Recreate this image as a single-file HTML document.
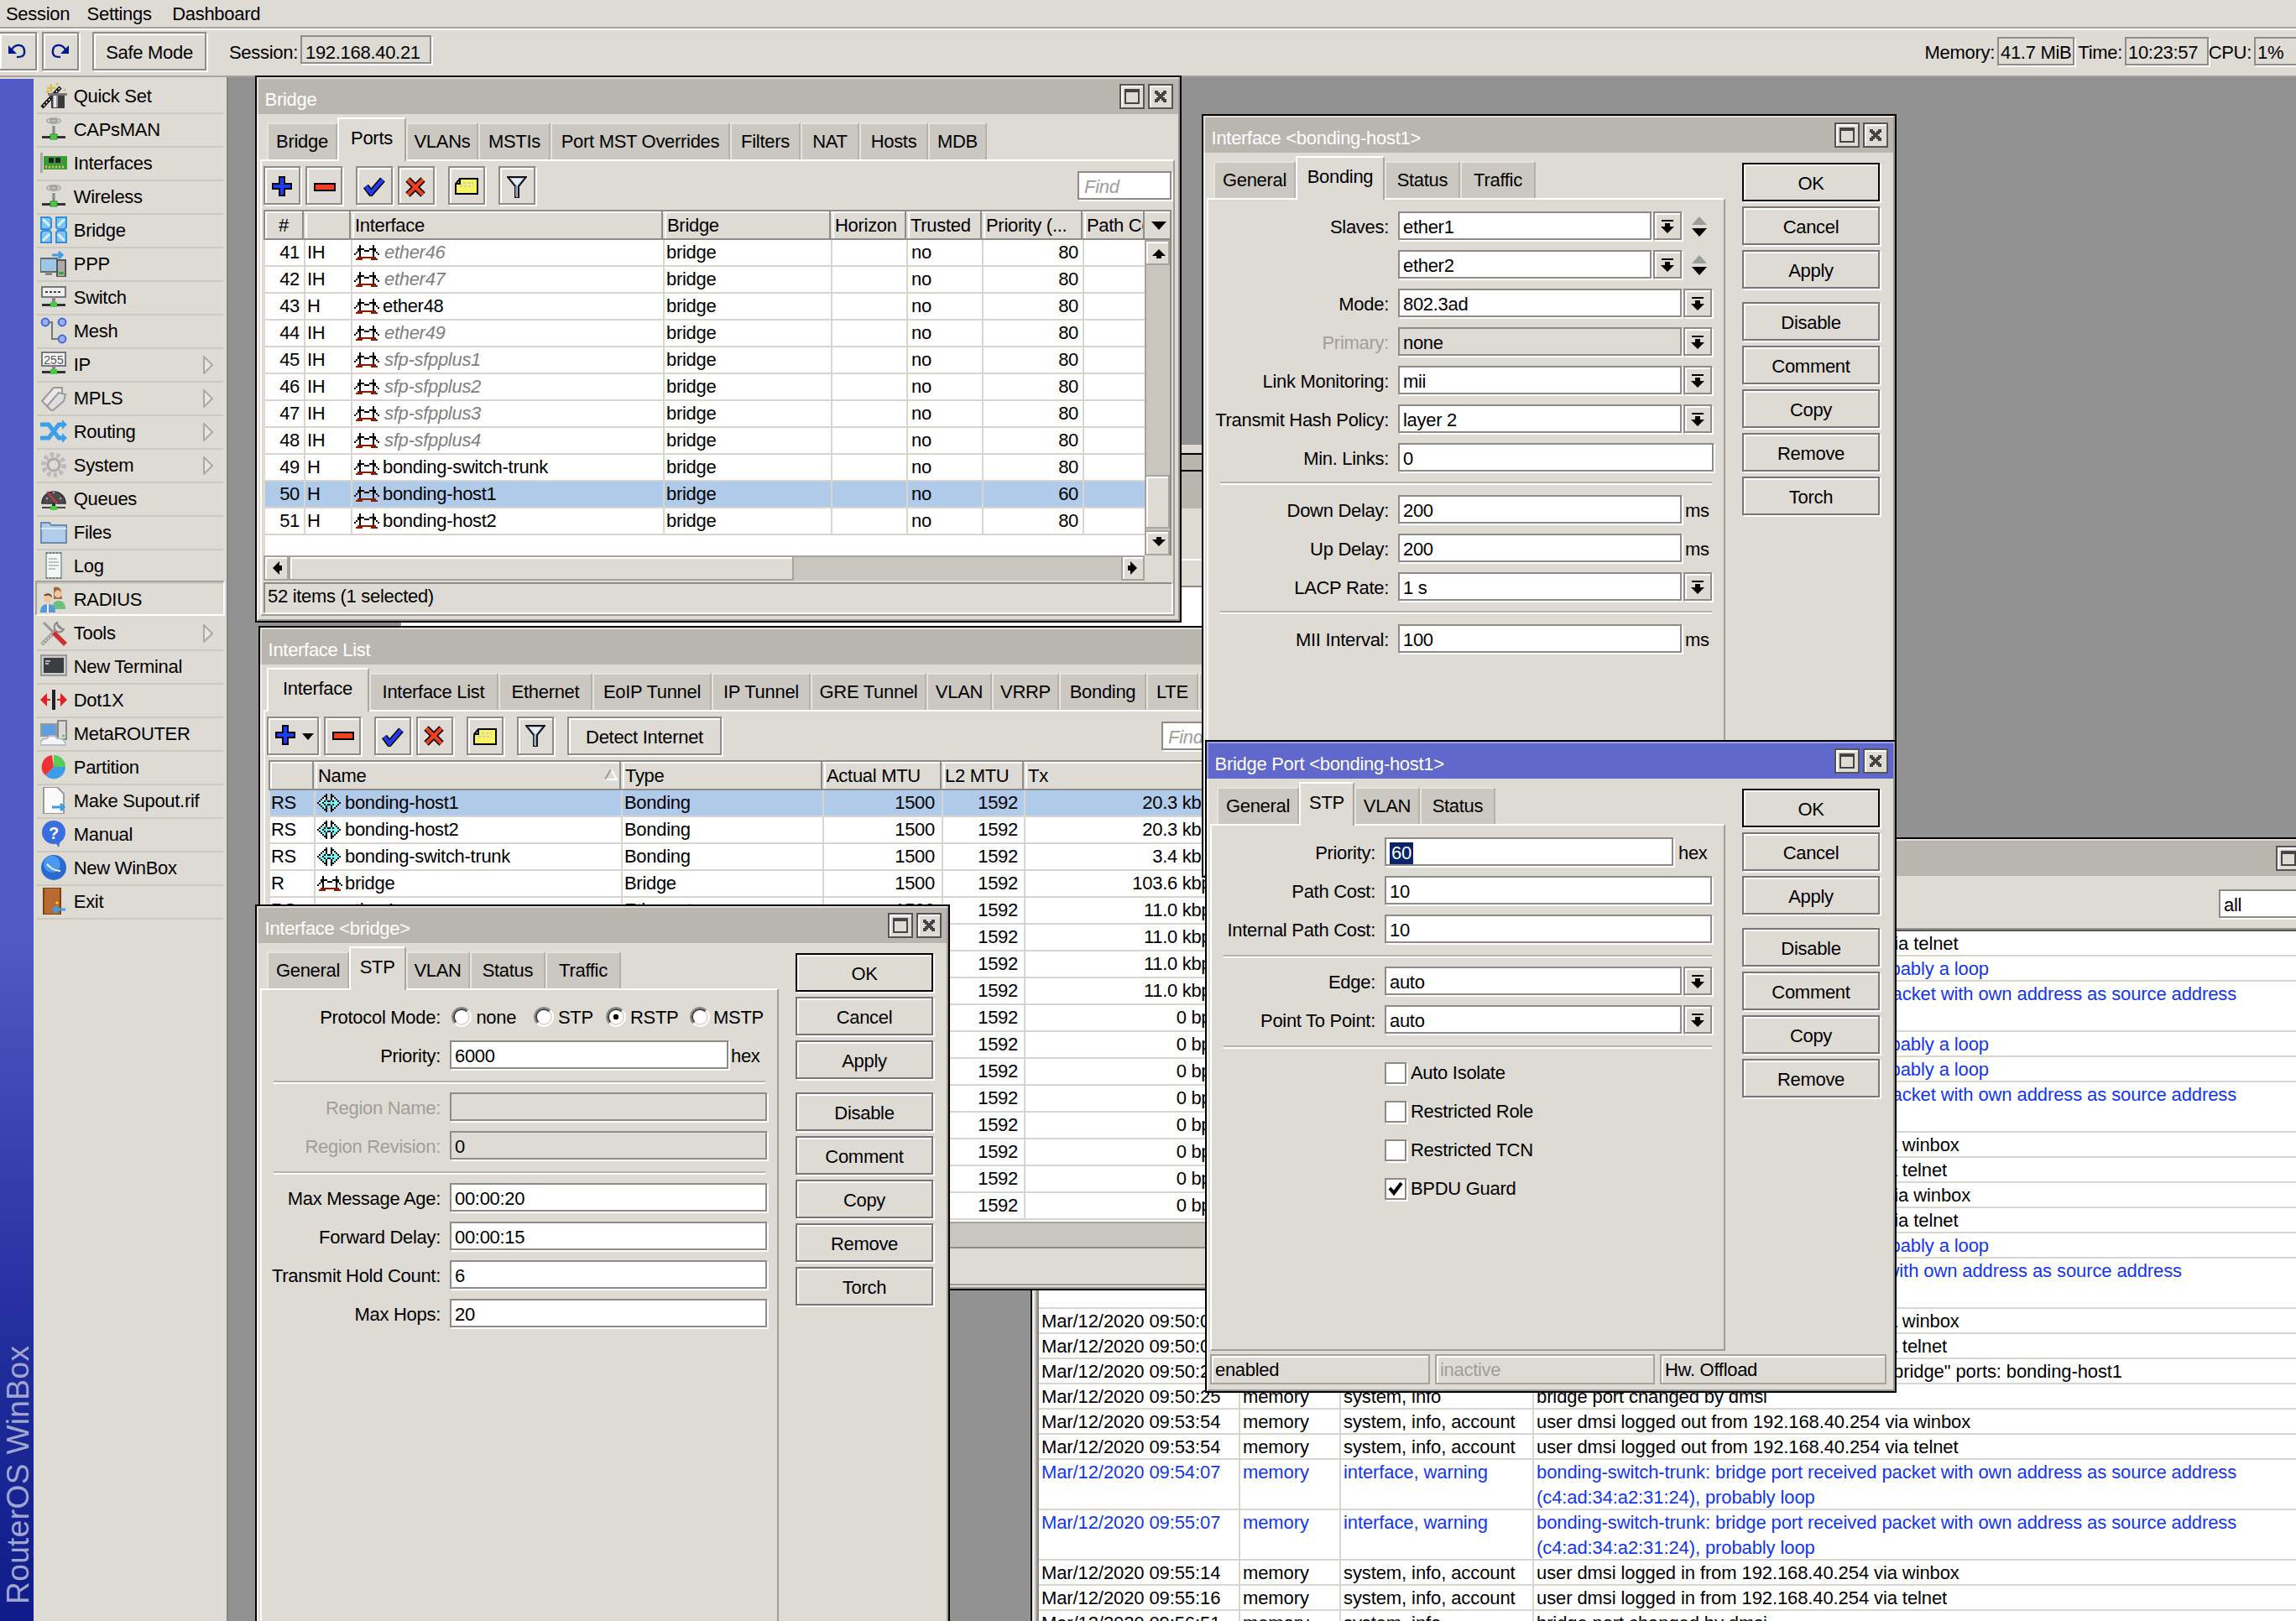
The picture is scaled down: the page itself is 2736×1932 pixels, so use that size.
<!DOCTYPE html><html><head><meta charset="utf-8"><style>
html,body{margin:0;padding:0;background:#DEDBD5;overflow:hidden}
#root{position:absolute;left:0;top:0;width:1368px;height:966px;transform:scale(2);transform-origin:0 0;overflow:hidden;background:#DEDBD5;font-family:"Liberation Sans",sans-serif;font-size:11px;line-height:13px;color:#000}
.a{position:absolute;box-sizing:content-box}
.t{position:absolute;white-space:nowrap;letter-spacing:-0.15px}
.btn{border:1px solid #767676;background:#DEDBD5;box-shadow:inset 1px 1px 0 #fff,1px 1px 0 #fff}
.inp{border:1px solid #8E8C88;box-shadow:1px 1px 0 #fff}
.clip{position:absolute;overflow:hidden}
</style></head><body><div id="root"><div class="t" style="left:3.5px;top:1.70px;">Session</div>
<div class="t" style="left:51.8px;top:1.70px;">Settings</div>
<div class="t" style="left:102.6px;top:1.70px;">Dashboard</div>
<div class="a" style="left:0px;top:16px;width:1368px;height:1px;background:#A6A39D"></div>
<div class="a" style="left:0px;top:17px;width:1368px;height:1px;background:#fff"></div>
<div class="a btn" style="left:-1px;top:19px;width:21px;height:21px;border-color:#8E8C88;"></div>
<svg class="a" style="left:4px;top:25px" width="12" height="10" viewBox="0 0 12 10"><path d="M1 2v5h5z" fill="#001A90"/><path d="M3 4.5C5 1 10 1 10.5 5S8 9 6 9" stroke="#001A90" stroke-width="1.2" fill="none"/></svg>
<div class="a btn" style="left:25px;top:19px;width:20px;height:21px;border-color:#8E8C88;"></div>
<svg class="a" style="left:30px;top:25px" width="12" height="10" viewBox="0 0 12 10"><path d="M11 2v5H6z" fill="#001A90"/><path d="M9 4.5C7 1 2 1 1.5 5S4 9 6 9" stroke="#001A90" stroke-width="1.2" fill="none"/></svg>
<div class="a btn" style="left:55px;top:19px;width:66px;height:21px;border-color:#8E8C88;"></div>
<div class="t" style="left:-111.0px;width:400px;text-align:center;top:24.70px;">Safe Mode</div>
<div class="t" style="right:1190.5px;top:24.70px;">Session:</div>
<div class="a inp" style="left:179px;top:21px;width:76px;height:15px;background:#DEDBD5"></div>
<div class="t" style="left:182px;top:24.70px;">192.168.40.21</div>
<div class="a" style="left:0px;top:45px;width:1368px;height:1px;background:#A6A39D"></div>
<div class="t" style="right:179.5px;top:24.70px;">Memory:</div>
<div class="a inp" style="left:1190px;top:22px;width:44px;height:15px;background:#DEDBD5"></div>
<div class="t" style="left:1192px;top:24.70px;">41.7 MiB</div>
<div class="t" style="right:103.5px;top:24.70px;">Time:</div>
<div class="a inp" style="left:1266px;top:22px;width:48px;height:15px;background:#DEDBD5"></div>
<div class="t" style="left:1268px;top:24.70px;">10:23:57</div>
<div class="t" style="right:26.5px;top:24.70px;">CPU:</div>
<div class="a inp" style="left:1343px;top:22px;width:28px;height:15px;background:#DEDBD5"></div>
<div class="t" style="left:1345px;top:24.70px;">1%</div>
<div class="a" style="left:0px;top:46px;width:20px;height:920px;background:linear-gradient(to bottom,#5159C6 0px,#5159C6 515px,#3B44B2 620px,#2832A2 720px,#1C2896 800px,#0F1C8A 920px)"></div>
<div class="a" style="left:0px;top:46px;width:20px;height:1px;background:#DEDBD5"></div>
<div class="t" style="left:1px;top:966px;width:170px;height:20px;transform-origin:0 0;transform:rotate(-90deg);font-size:18.6px;line-height:20px;color:#A0A6D0;letter-spacing:0.15px;padding-left:10px">RouterOS WinBox</div>
<div class="a" style="left:135px;top:46px;width:1233px;height:920px;background:#929292"></div>
<div class="a" style="left:135px;top:46px;width:1px;height:920px;background:#858585"></div>
<svg class="a" style="left:24px;top:49px" width="16" height="16" viewBox="0 0 16 16"><path d="M1 15L12 3" stroke="#111" stroke-width="2.2"/><path d="M2 14L12 3" stroke="#fff" stroke-width="0.8" stroke-dasharray="1 1.2"/><rect x="6.5" y="7" width="8" height="8.5" fill="#3a3a3a"/><rect x="7.5" y="8" width="3" height="7" fill="#9a9a9a"/><rect x="8" y="8" width="1.5" height="7" fill="#e8e8e8"/><rect x="4.5" y="6.5" width="12" height="1.4" fill="#777"/><path d="M6.5 1v5M4 3.5h5" stroke="#d8c048" stroke-width="1.2"/><circle cx="4.5" cy="5.5" r="1" fill="#d8c048"/><circle cx="10" cy="1" r=".8" fill="#d8c048"/><circle cx="14.5" cy="4.5" r=".8" fill="#d8c048"/></svg>
<div class="t" style="left:43.9px;top:50.70px;">Quick Set</div>
<div class="a" style="left:22px;top:67px;width:111px;height:1px;background:#CCC9C2"></div>
<svg class="a" style="left:24px;top:69px" width="16" height="16" viewBox="0 0 16 16"><ellipse cx="8" cy="3" rx="4" ry="1.6" fill="none" stroke="#aaa" stroke-width=".9"/><ellipse cx="8" cy="3" rx="2" ry=".8" fill="none" stroke="#999" stroke-width=".8"/><rect x="7.2" y="6" width="1.6" height="6" fill="#8a8a8a"/><rect x="1" y="12" width="14" height="1.5" fill="#333"/><rect x="6" y="11" width="4" height="3" fill="#4c4" stroke="#292" stroke-width=".5"/></svg>
<div class="t" style="left:43.9px;top:70.70px;">CAPsMAN</div>
<div class="a" style="left:22px;top:87px;width:111px;height:1px;background:#CCC9C2"></div>
<svg class="a" style="left:24px;top:89px" width="16" height="16" viewBox="0 0 16 16"><rect x="0" y="2" width="1.5" height="12" fill="#aaa"/><rect x="2" y="4" width="14" height="8" fill="#3a9a3a"/><rect x="5" y="5" width="3" height="3" fill="#222"/><rect x="9" y="5" width="3" height="3" fill="#222"/><path d="M3 10.5h12" stroke="#d8c060" stroke-width="1.5" stroke-dasharray="1 1"/></svg>
<div class="t" style="left:43.9px;top:90.70px;">Interfaces</div>
<div class="a" style="left:22px;top:107px;width:111px;height:1px;background:#CCC9C2"></div>
<svg class="a" style="left:24px;top:109px" width="16" height="16" viewBox="0 0 16 16"><ellipse cx="8" cy="3" rx="4" ry="1.6" fill="none" stroke="#aaa" stroke-width=".9"/><ellipse cx="8" cy="3" rx="2" ry=".8" fill="none" stroke="#999" stroke-width=".8"/><rect x="7.2" y="6" width="1.6" height="6" fill="#8a8a8a"/><rect x="1" y="12" width="14" height="1.5" fill="#333"/><rect x="6" y="11" width="4" height="3" fill="#4c4" stroke="#292" stroke-width=".5"/></svg>
<div class="t" style="left:43.9px;top:110.70px;">Wireless</div>
<div class="a" style="left:22px;top:127px;width:111px;height:1px;background:#CCC9C2"></div>
<svg class="a" style="left:24px;top:129px" width="16" height="16" viewBox="0 0 16 16"><g fill="#7CC4F4" stroke="#3A8ED8" stroke-width="1"><path d="M0.5 0.5h5l1 1v5l-1 1h-5z"/><path d="M9.5 0.5h6v6l-1 1h-4l-1-1z"/><path d="M0.5 9.5l1-1h4l1 1v6h-6z"/><path d="M10.5 8.5h4l1 1v6h-6v-6z"/></g><path d="M1.5 1.5l4 4M14.5 1.5l-4 4M1.5 14.5l4-4M14.5 14.5l-4-4" stroke="#D8F0FF" stroke-width="1.5"/></svg>
<div class="t" style="left:43.9px;top:130.70px;">Bridge</div>
<div class="a" style="left:22px;top:147px;width:111px;height:1px;background:#CCC9C2"></div>
<svg class="a" style="left:24px;top:149px" width="16" height="16" viewBox="0 0 16 16"><rect x="0" y="5" width="10" height="8" fill="#9cc8e8" stroke="#666"/><rect x="3" y="13" width="4" height="2" fill="#888"/><rect x="10" y="6" width="5" height="10" fill="#aaa" stroke="#555"/><rect x="11" y="13" width="3" height="1.5" fill="#3a3"/><path d="M7 3h6M11 1l2 2-2 2" stroke="#3a9ee8" stroke-width="1.5" fill="none"/></svg>
<div class="t" style="left:43.9px;top:150.70px;">PPP</div>
<div class="a" style="left:22px;top:167px;width:111px;height:1px;background:#CCC9C2"></div>
<svg class="a" style="left:24px;top:169px" width="16" height="16" viewBox="0 0 16 16"><rect x="1" y="2" width="14" height="6" fill="#eee" stroke="#777"/><path d="M3 5h10" stroke="#444" stroke-dasharray="1.5 1"/><rect x="7" y="8" width="2" height="4" fill="#888"/><rect x="1" y="12" width="14" height="1.5" fill="#333"/><rect x="6" y="11" width="4" height="3" fill="#4c4"/></svg>
<div class="t" style="left:43.9px;top:170.70px;">Switch</div>
<div class="a" style="left:22px;top:187px;width:111px;height:1px;background:#CCC9C2"></div>
<svg class="a" style="left:24px;top:189px" width="16" height="16" viewBox="0 0 16 16"><circle cx="3" cy="3" r="2.2" fill="#9ab0f0" stroke="#4466dd"/><circle cx="13" cy="3" r="2.2" fill="#9ab0f0" stroke="#4466dd"/><circle cx="13" cy="13" r="2.2" fill="#9ab0f0" stroke="#4466dd"/><path d="M5 3h2v10h4M7 8h0" stroke="#777" fill="none"/></svg>
<div class="t" style="left:43.9px;top:190.70px;">Mesh</div>
<div class="a" style="left:22px;top:207px;width:111px;height:1px;background:#CCC9C2"></div>
<svg class="a" style="left:24px;top:209px" width="16" height="16" viewBox="0 0 16 16"><rect x="1" y="1" width="14" height="8" fill="#f4f4f4" stroke="#777"/><text x="8" y="8" font-size="7" text-anchor="middle" fill="#555" font-family="Liberation Sans">255</text><rect x="7" y="9" width="2" height="3" fill="#888"/><rect x="1" y="12" width="14" height="1.5" fill="#333"/><rect x="6" y="11" width="4" height="3" fill="#4c4"/></svg>
<div class="t" style="left:43.9px;top:210.70px;">IP</div>
<svg class="a" style="left:121px;top:212px" width="6" height="11" viewBox="0 0 6 11"><path d="M0.5 0.5L5.5 5.5 0.5 10.5z" fill="#E8E6E2" stroke="#AAA" stroke-width="1"/></svg>
<div class="a" style="left:22px;top:227px;width:111px;height:1px;background:#CCC9C2"></div>
<svg class="a" style="left:24px;top:229px" width="16" height="16" viewBox="0 0 16 16"><path d="M1 10L8 2l5 0 0 4-8 8z" fill="#e8e8e8" stroke="#999"/><path d="M4 13L11 5l4 1-1 4-7 6z" fill="#ddd" stroke="#999"/></svg>
<div class="t" style="left:43.9px;top:230.70px;">MPLS</div>
<svg class="a" style="left:121px;top:232px" width="6" height="11" viewBox="0 0 6 11"><path d="M0.5 0.5L5.5 5.5 0.5 10.5z" fill="#E8E6E2" stroke="#AAA" stroke-width="1"/></svg>
<div class="a" style="left:22px;top:247px;width:111px;height:1px;background:#CCC9C2"></div>
<svg class="a" style="left:24px;top:249px" width="16" height="16" viewBox="0 0 16 16"><path d="M0 4h5l6 8h3M0 12h5l6-8h3" stroke="#3a9ee8" stroke-width="2.5" fill="none"/><path d="M13 1l3 3-3 3zM13 9l3 3-3 3z" fill="#3a9ee8"/></svg>
<div class="t" style="left:43.9px;top:250.70px;">Routing</div>
<svg class="a" style="left:121px;top:252px" width="6" height="11" viewBox="0 0 6 11"><path d="M0.5 0.5L5.5 5.5 0.5 10.5z" fill="#E8E6E2" stroke="#AAA" stroke-width="1"/></svg>
<div class="a" style="left:22px;top:267px;width:111px;height:1px;background:#CCC9C2"></div>
<svg class="a" style="left:24px;top:269px" width="16" height="16" viewBox="0 0 16 16"><circle cx="8" cy="8" r="6" fill="none" stroke="#bbb" stroke-width="3" stroke-dasharray="2.2 1.5"/><circle cx="8" cy="8" r="3.5" fill="none" stroke="#aaa" stroke-width="1.5"/></svg>
<div class="t" style="left:43.9px;top:270.70px;">System</div>
<svg class="a" style="left:121px;top:272px" width="6" height="11" viewBox="0 0 6 11"><path d="M0.5 0.5L5.5 5.5 0.5 10.5z" fill="#E8E6E2" stroke="#AAA" stroke-width="1"/></svg>
<div class="a" style="left:22px;top:287px;width:111px;height:1px;background:#CCC9C2"></div>
<svg class="a" style="left:24px;top:289px" width="16" height="16" viewBox="0 0 16 16"><path d="M1 11a7 7 0 0 1 14 0z" fill="#4a4a50" stroke="#333" stroke-width=".8"/><path d="M4 4l6 7" stroke="#f04030" stroke-width="1.2" stroke-dasharray="1 .6"/><circle cx="4" cy="8" r=".6" fill="#aaa"/><circle cx="12" cy="8" r=".6" fill="#aaa"/><circle cx="8" cy="4.5" r=".6" fill="#aaa"/><rect x="7" y="11" width="2" height="2" fill="#333"/><path d="M1 13.5h14" stroke="#444" stroke-width="1"/><rect x="6" y="12.5" width="4" height="2.5" fill="#4c4"/></svg>
<div class="t" style="left:43.9px;top:290.70px;">Queues</div>
<div class="a" style="left:22px;top:307px;width:111px;height:1px;background:#CCC9C2"></div>
<svg class="a" style="left:24px;top:309px" width="16" height="16" viewBox="0 0 16 16"><path d="M0.5 2.5h5l1 1.5h9v10.5H0.5z" fill="#b0cce8" stroke="#6a8cb0"/><path d="M0.5 6h15" stroke="#d8e8f8"/></svg>
<div class="t" style="left:43.9px;top:310.70px;">Files</div>
<div class="a" style="left:22px;top:327px;width:111px;height:1px;background:#CCC9C2"></div>
<svg class="a" style="left:24px;top:329px" width="16" height="16" viewBox="0 0 16 16"><rect x="3.5" y="0.5" width="9" height="15" fill="#f4f6f4" stroke="#9aa"/><path d="M3.5 0.5h9M3.5 15.5h9" stroke="#777" stroke-dasharray="1 1"/><path d="M5 4h5M5 6h6M5 8h6M5 10h4" stroke="#b8c4c8"/></svg>
<div class="t" style="left:43.9px;top:330.70px;">Log</div>
<div class="a" style="left:22px;top:347px;width:111px;height:1px;background:#CCC9C2"></div>
<div class="a" style="left:21px;top:346px;width:111px;height:19px;border-top:1px solid #A6A39D;border-left:1px solid #A6A39D;border-bottom:1px solid #fff;border-right:1px solid #fff"></div>
<svg class="a" style="left:24px;top:349px" width="16" height="16" viewBox="0 0 16 16"><path d="M8 1c3-1 5 1 4.5 4l.5 3h-5z" fill="#a06840"/><circle cx="10.5" cy="5" r="2.2" fill="#f0c8a0"/><path d="M7 14c0-4 2-5 4-5s4 1 4 5z" fill="#6cc080"/><path d="M2 6c1-2 5-2 5 1z" fill="#704830"/><circle cx="4.5" cy="8" r="2.3" fill="#f0c8a0"/><path d="M0 16c0-4 2-5 4.5-5s4.5 1 4.5 5z" fill="#5898d8"/><path d="M4.5 11v5" stroke="#fff"/></svg>
<div class="t" style="left:43.9px;top:350.70px;">RADIUS</div>
<svg class="a" style="left:24px;top:369px" width="16" height="16" viewBox="0 0 16 16"><path d="M1 15L12 4" stroke="#999" stroke-width="2.2"/><path d="M1.5 14.5L11.5 4.5" stroke="#eee" stroke-width=".8" stroke-dasharray="1 1"/><path d="M10 2a3 3 0 1 0 4 4l-2-.5-1.5-1.5z" fill="#ddd" stroke="#888"/><path d="M2 2l6 6" stroke="#999" stroke-width="1.5"/><path d="M8 8l7 7" stroke="#d03030" stroke-width="2.8"/></svg>
<div class="t" style="left:43.9px;top:370.70px;">Tools</div>
<svg class="a" style="left:121px;top:372px" width="6" height="11" viewBox="0 0 6 11"><path d="M0.5 0.5L5.5 5.5 0.5 10.5z" fill="#E8E6E2" stroke="#AAA" stroke-width="1"/></svg>
<div class="a" style="left:22px;top:387px;width:111px;height:1px;background:#CCC9C2"></div>
<svg class="a" style="left:24px;top:389px" width="16" height="16" viewBox="0 0 16 16"><rect x="0.5" y="1.5" width="15" height="12" fill="#ccc" stroke="#999"/><rect x="2" y="3" width="12" height="9" fill="#3a3c40"/><path d="M3 5h3M3 6.5h2" stroke="#ddd" stroke-width=".8"/></svg>
<div class="t" style="left:43.9px;top:390.70px;">New Terminal</div>
<div class="a" style="left:22px;top:407px;width:111px;height:1px;background:#CCC9C2"></div>
<svg class="a" style="left:24px;top:409px" width="16" height="16" viewBox="0 0 16 16"><path d="M0 8l4-4v8zM16 8l-4-4v8z" fill="#d22"/><rect x="7" y="2" width="2" height="12" fill="#222"/><path d="M4 8h2M10 8h2" stroke="#d22"/></svg>
<div class="t" style="left:43.9px;top:410.70px;">Dot1X</div>
<div class="a" style="left:22px;top:427px;width:111px;height:1px;background:#CCC9C2"></div>
<svg class="a" style="left:24px;top:429px" width="16" height="16" viewBox="0 0 16 16"><rect x="0.5" y="2.5" width="9" height="7" fill="#5aa0e0" stroke="#999"/><rect x="10.5" y="0.5" width="5" height="11" fill="#d8d8d8" stroke="#888"/><rect x="13" y="9" width="1.5" height="1" fill="#4c4"/><path d="M0 15c0-3 2-4 4-4 1-2 5-2 6 0 3 0 5 1 5 4z" fill="#f4f4fa" stroke="#bbc"/></svg>
<div class="t" style="left:43.9px;top:430.70px;">MetaROUTER</div>
<div class="a" style="left:22px;top:447px;width:111px;height:1px;background:#CCC9C2"></div>
<svg class="a" style="left:24px;top:449px" width="16" height="16" viewBox="0 0 16 16"><path d="M8 8L8 1a7 7 0 0 1 7 7z" fill="#5c5"/><path d="M8 8h7a7 7 0 0 1-12 5z" fill="#3a9ee8"/><path d="M8 8L3 13A7 7 0 0 1 7 1z" fill="#e33"/></svg>
<div class="t" style="left:43.9px;top:450.70px;">Partition</div>
<div class="a" style="left:22px;top:467px;width:111px;height:1px;background:#CCC9C2"></div>
<svg class="a" style="left:24px;top:469px" width="16" height="16" viewBox="0 0 16 16"><path d="M2 0h8l4 4v12H2z" fill="#fafafa" stroke="#999"/><path d="M7 12h7M12 10l2 2-2 2" stroke="#3a9ee8" stroke-width="1.5" fill="none"/></svg>
<div class="t" style="left:43.9px;top:470.70px;">Make Supout.rif</div>
<div class="a" style="left:22px;top:487px;width:111px;height:1px;background:#CCC9C2"></div>
<svg class="a" style="left:24px;top:489px" width="16" height="16" viewBox="0 0 16 16"><circle cx="8" cy="7" r="7" fill="#3a6ee0"/><path d="M9 13l2 3 1-4z" fill="#3a6ee0"/><text x="8" y="11" font-size="10" font-weight="bold" text-anchor="middle" fill="#fff" font-family="Liberation Sans">?</text></svg>
<div class="t" style="left:43.9px;top:490.70px;">Manual</div>
<div class="a" style="left:22px;top:507px;width:111px;height:1px;background:#CCC9C2"></div>
<svg class="a" style="left:24px;top:509px" width="16" height="16" viewBox="0 0 16 16"><circle cx="8" cy="8" r="7.5" fill="#2a6ad0"/><circle cx="7" cy="6" r="5" fill="#4a9af0"/><path d="M4 6c2 2 4 4 8 4" stroke="#fff" fill="none"/></svg>
<div class="t" style="left:43.9px;top:510.70px;">New WinBox</div>
<div class="a" style="left:22px;top:527px;width:111px;height:1px;background:#CCC9C2"></div>
<svg class="a" style="left:24px;top:529px" width="16" height="16" viewBox="0 0 16 16"><rect x="2" y="0" width="10" height="16" fill="#b86a30" stroke="#7a4010"/><circle cx="10" cy="9" r=".8" fill="#ee0"/><path d="M15 13H8M10 11l-2 2 2 2" stroke="#3a9ee8" stroke-width="1.5" fill="none"/></svg>
<div class="t" style="left:43.9px;top:530.70px;">Exit</div>
<div class="a" style="left:22px;top:547px;width:111px;height:1px;background:#CCC9C2"></div>
<div class="a" style="left:0;top:0;width:1368px;height:966px;z-index:1">
<div class="a" style="left:704px;top:265px;width:14px;height:5px;background:#DEDBD5"></div>
<div class="a" style="left:704px;top:270px;width:14px;height:1px;background:#000"></div>
<div class="a" style="left:704px;top:271px;width:14px;height:9px;background:#B9B6B0"></div>
<div class="a" style="left:704px;top:280px;width:14px;height:1px;background:#000"></div>
<div class="a" style="left:704px;top:281px;width:14px;height:22px;background:#B9B6B0"></div>
<div class="a" style="left:704px;top:303px;width:14px;height:30px;background:#DEDBD5"></div>
<div class="a" style="left:704px;top:333px;width:14px;height:1px;background:#fff"></div>
<div class="a" style="left:704px;top:334px;width:14px;height:15px;background:#DEDBD5"></div>
<div class="a" style="left:704px;top:349px;width:14px;height:1px;background:#8E8C88"></div>
<div class="a" style="left:239px;top:350px;width:479px;height:23px;background:#fff"></div>
</div>
<div class="a" style="left:0;top:0;width:1368px;height:966px;z-index:2">
<div class="a" style="left:614px;top:499px;width:777px;height:498px;border:1px solid #000;background:#DEDBD5"></div>
<div class="a" style="left:615px;top:500px;width:775px;height:496px;border-top:1px solid #E2DFDA;border-left:1px solid #F2F0EC;border-right:1px solid #9A9894;border-bottom:1px solid #9A9894"></div>
<div class="a" style="left:615px;top:500px;width:776px;height:22px;background:#B9B6B0;border-top:1px solid #E2DFDA;border-left:1px solid #E2DFDA;box-sizing:border-box"></div>
<div class="t" style="left:619.8px;top:506.70px;color:#fff">Log</div>
<div class="a" style="left:1356px;top:504px;width:13px;height:13px;border:1px solid #555;background:#DEDBD5;box-shadow:inset 1px 1px 0 #fff"></div>
<div class="a" style="left:1359px;top:507px;width:7px;height:6px;border:1px solid #444;border-top-width:2px"></div>
<div class="a" style="left:1373px;top:504px;width:13px;height:13px;border:1px solid #555;background:#DEDBD5;box-shadow:inset 1px 1px 0 #fff"></div>
<svg class="a" style="left:1377px;top:508px" width="7" height="7" viewBox="0 0 7 7" shape-rendering="crispEdges"><rect x="0" y="0" width="2" height="1" fill="#444"/><rect x="5" y="0" width="2" height="1" fill="#444"/><rect x="0" y="1" width="3" height="1" fill="#444"/><rect x="4" y="1" width="3" height="1" fill="#444"/><rect x="1" y="2" width="5" height="1" fill="#444"/><rect x="2" y="3" width="3" height="1" fill="#444"/><rect x="1" y="4" width="5" height="1" fill="#444"/><rect x="0" y="5" width="3" height="1" fill="#444"/><rect x="4" y="5" width="3" height="1" fill="#444"/><rect x="0" y="6" width="2" height="1" fill="#444"/><rect x="5" y="6" width="2" height="1" fill="#444"/></svg>
<div class="a inp" style="left:1322px;top:530px;width:58px;height:15px;background:#fff"></div>
<div class="t" style="left:1325px;top:532.70px;">all</div>
<div class="a" style="left:619px;top:553px;width:760px;height:420px;background:#fff"></div>
<div class="a" style="left:617px;top:553px;width:1px;height:413px;background:#A6A39D"></div>
<div class="a" style="left:618px;top:553px;width:1px;height:413px;background:#8E8C88"></div>
<div class="a" style="left:617px;top:553px;width:751px;height:1px;background:#9A9894"></div>
<div class="a" style="left:617px;top:554px;width:751px;height:1px;background:#555"></div>
<div class="t" style="left:620.5px;top:555.70px;letter-spacing:-0.05px">Mar/12/2020 09:47:12</div>
<div class="t" style="left:740.5px;top:555.70px;letter-spacing:-0.05px">memory</div>
<div class="t" style="left:800.5px;top:555.70px;letter-spacing:-0.05px">system, info, account</div>
<div class="t" style="left:915.5px;top:555.70px;letter-spacing:-0.05px">user dmsi logged out from 192.168.40.254 via telnet</div>
<div class="a" style="left:619px;top:569px;width:749px;height:1px;background:#D9D6CF"></div>
<div class="t" style="left:620.5px;top:570.70px;color:#1236F0;letter-spacing:-0.05px">Mar/12/2020 09:47:40</div>
<div class="t" style="left:740.5px;top:570.70px;color:#1236F0;letter-spacing:-0.05px">memory</div>
<div class="t" style="left:800.5px;top:570.70px;color:#1236F0;letter-spacing:-0.05px">interface, warning</div>
<div class="t" style="right:183px;top:570.70px;color:#1236F0;letter-spacing:-0.05px">bonding-host1: bridge RX looped packet, probably a loop</div>
<div class="a" style="left:619px;top:584px;width:749px;height:1px;background:#D9D6CF"></div>
<div class="t" style="left:620.5px;top:585.70px;color:#1236F0;letter-spacing:-0.05px">Mar/12/2020 09:47:41</div>
<div class="t" style="left:740.5px;top:585.70px;color:#1236F0;letter-spacing:-0.05px">memory</div>
<div class="t" style="left:800.5px;top:585.70px;color:#1236F0;letter-spacing:-0.05px">interface, warning</div>
<div class="t" style="left:915.5px;top:585.70px;color:#1236F0;letter-spacing:-0.05px">bonding-switch-trunk: bridge port received packet with own address as source address</div>
<div class="t" style="left:915.5px;top:600.70px;color:#1236F0;letter-spacing:-0.05px">(c4:ad:34:a2:31:24), probably loop</div>
<div class="a" style="left:619px;top:614px;width:749px;height:1px;background:#D9D6CF"></div>
<div class="t" style="left:620.5px;top:615.70px;color:#1236F0;letter-spacing:-0.05px">Mar/12/2020 09:48:02</div>
<div class="t" style="left:740.5px;top:615.70px;color:#1236F0;letter-spacing:-0.05px">memory</div>
<div class="t" style="left:800.5px;top:615.70px;color:#1236F0;letter-spacing:-0.05px">interface, warning</div>
<div class="t" style="right:183px;top:615.70px;color:#1236F0;letter-spacing:-0.05px">bonding-host2: bridge RX looped packet, probably a loop</div>
<div class="a" style="left:619px;top:629px;width:749px;height:1px;background:#D9D6CF"></div>
<div class="t" style="left:620.5px;top:630.70px;color:#1236F0;letter-spacing:-0.05px">Mar/12/2020 09:48:03</div>
<div class="t" style="left:740.5px;top:630.70px;color:#1236F0;letter-spacing:-0.05px">memory</div>
<div class="t" style="left:800.5px;top:630.70px;color:#1236F0;letter-spacing:-0.05px">interface, warning</div>
<div class="t" style="right:183px;top:630.70px;color:#1236F0;letter-spacing:-0.05px">bonding-host1: bridge RX looped packet, probably a loop</div>
<div class="a" style="left:619px;top:644px;width:749px;height:1px;background:#D9D6CF"></div>
<div class="t" style="left:620.5px;top:645.70px;color:#1236F0;letter-spacing:-0.05px">Mar/12/2020 09:48:04</div>
<div class="t" style="left:740.5px;top:645.70px;color:#1236F0;letter-spacing:-0.05px">memory</div>
<div class="t" style="left:800.5px;top:645.70px;color:#1236F0;letter-spacing:-0.05px">interface, warning</div>
<div class="t" style="left:915.5px;top:645.70px;color:#1236F0;letter-spacing:-0.05px">bonding-switch-trunk: bridge port received packet with own address as source address</div>
<div class="t" style="left:915.5px;top:660.70px;color:#1236F0;letter-spacing:-0.05px">(c4:ad:34:a2:31:24), probably loop</div>
<div class="a" style="left:619px;top:674px;width:749px;height:1px;background:#D9D6CF"></div>
<div class="t" style="left:620.5px;top:675.70px;letter-spacing:-0.05px">Mar/12/2020 09:49:10</div>
<div class="t" style="left:740.5px;top:675.70px;letter-spacing:-0.05px">memory</div>
<div class="t" style="left:800.5px;top:675.70px;letter-spacing:-0.05px">system, info, account</div>
<div class="t" style="left:915.5px;top:675.70px;letter-spacing:-0.05px">user dmsi logged in from 192.168.40.254 via winbox</div>
<div class="a" style="left:619px;top:689px;width:749px;height:1px;background:#D9D6CF"></div>
<div class="t" style="left:620.5px;top:690.70px;letter-spacing:-0.05px">Mar/12/2020 09:49:11</div>
<div class="t" style="left:740.5px;top:690.70px;letter-spacing:-0.05px">memory</div>
<div class="t" style="left:800.5px;top:690.70px;letter-spacing:-0.05px">system, info, account</div>
<div class="t" style="left:915.5px;top:690.70px;letter-spacing:-0.05px">user dmsi logged in from 192.168.40.254 via telnet</div>
<div class="a" style="left:619px;top:704px;width:749px;height:1px;background:#D9D6CF"></div>
<div class="t" style="left:620.5px;top:705.70px;letter-spacing:-0.05px">Mar/12/2020 09:49:30</div>
<div class="t" style="left:740.5px;top:705.70px;letter-spacing:-0.05px">memory</div>
<div class="t" style="left:800.5px;top:705.70px;letter-spacing:-0.05px">system, info, account</div>
<div class="t" style="left:915.5px;top:705.70px;letter-spacing:-0.05px">user dmsi logged out from 192.168.40.254 via winbox</div>
<div class="a" style="left:619px;top:719px;width:749px;height:1px;background:#D9D6CF"></div>
<div class="t" style="left:620.5px;top:720.70px;letter-spacing:-0.05px">Mar/12/2020 09:49:30</div>
<div class="t" style="left:740.5px;top:720.70px;letter-spacing:-0.05px">memory</div>
<div class="t" style="left:800.5px;top:720.70px;letter-spacing:-0.05px">system, info, account</div>
<div class="t" style="left:915.5px;top:720.70px;letter-spacing:-0.05px">user dmsi logged out from 192.168.40.254 via telnet</div>
<div class="a" style="left:619px;top:734px;width:749px;height:1px;background:#D9D6CF"></div>
<div class="t" style="left:620.5px;top:735.70px;color:#1236F0;letter-spacing:-0.05px">Mar/12/2020 09:49:52</div>
<div class="t" style="left:740.5px;top:735.70px;color:#1236F0;letter-spacing:-0.05px">memory</div>
<div class="t" style="left:800.5px;top:735.70px;color:#1236F0;letter-spacing:-0.05px">interface, warning</div>
<div class="t" style="right:183px;top:735.70px;color:#1236F0;letter-spacing:-0.05px">bonding-host1: bridge RX looped packet, probably a loop</div>
<div class="a" style="left:619px;top:749px;width:749px;height:1px;background:#D9D6CF"></div>
<div class="t" style="left:620.5px;top:750.70px;color:#1236F0;letter-spacing:-0.05px">Mar/12/2020 09:49:53</div>
<div class="t" style="left:740.5px;top:750.70px;color:#1236F0;letter-spacing:-0.05px">memory</div>
<div class="t" style="left:800.5px;top:750.70px;color:#1236F0;letter-spacing:-0.05px">interface, warning</div>
<div class="t" style="right:68px;top:750.70px;color:#1236F0;letter-spacing:-0.05px">bonding-host1: bridge port received packet with own address as source address</div>
<div class="t" style="left:915.5px;top:765.70px;color:#1236F0;letter-spacing:-0.05px">(c4:ad:34:a2:31:24), probably loop</div>
<div class="a" style="left:619px;top:779px;width:749px;height:1px;background:#D9D6CF"></div>
<div class="t" style="left:620.5px;top:780.70px;letter-spacing:-0.05px">Mar/12/2020 09:50:01</div>
<div class="t" style="left:740.5px;top:780.70px;letter-spacing:-0.05px">memory</div>
<div class="t" style="left:800.5px;top:780.70px;letter-spacing:-0.05px">system, info, account</div>
<div class="t" style="left:915.5px;top:780.70px;letter-spacing:-0.05px">user dmsi logged in from 192.168.40.254 via winbox</div>
<div class="a" style="left:619px;top:794px;width:749px;height:1px;background:#D9D6CF"></div>
<div class="t" style="left:620.5px;top:795.70px;letter-spacing:-0.05px">Mar/12/2020 09:50:02</div>
<div class="t" style="left:740.5px;top:795.70px;letter-spacing:-0.05px">memory</div>
<div class="t" style="left:800.5px;top:795.70px;letter-spacing:-0.05px">system, info, account</div>
<div class="t" style="left:915.5px;top:795.70px;letter-spacing:-0.05px">user dmsi logged in from 192.168.40.254 via telnet</div>
<div class="a" style="left:619px;top:809px;width:749px;height:1px;background:#D9D6CF"></div>
<div class="t" style="left:620.5px;top:810.70px;letter-spacing:-0.05px">Mar/12/2020 09:50:25</div>
<div class="t" style="left:740.5px;top:810.70px;letter-spacing:-0.05px">memory</div>
<div class="t" style="left:800.5px;top:810.70px;letter-spacing:-0.05px">system, info</div>
<div class="t" style="right:103.5px;top:810.70px;letter-spacing:-0.05px">bridge port added to "bridge" ports: bonding-host1</div>
<div class="a" style="left:619px;top:824px;width:749px;height:1px;background:#D9D6CF"></div>
<div class="t" style="left:620.5px;top:825.70px;letter-spacing:-0.05px">Mar/12/2020 09:50:25</div>
<div class="t" style="left:740.5px;top:825.70px;letter-spacing:-0.05px">memory</div>
<div class="t" style="left:800.5px;top:825.70px;letter-spacing:-0.05px">system, info</div>
<div class="t" style="left:915.5px;top:825.70px;letter-spacing:-0.05px">bridge port changed by dmsi</div>
<div class="a" style="left:619px;top:839px;width:749px;height:1px;background:#D9D6CF"></div>
<div class="t" style="left:620.5px;top:840.70px;letter-spacing:-0.05px">Mar/12/2020 09:53:54</div>
<div class="t" style="left:740.5px;top:840.70px;letter-spacing:-0.05px">memory</div>
<div class="t" style="left:800.5px;top:840.70px;letter-spacing:-0.05px">system, info, account</div>
<div class="t" style="left:915.5px;top:840.70px;letter-spacing:-0.05px">user dmsi logged out from 192.168.40.254 via winbox</div>
<div class="a" style="left:619px;top:854px;width:749px;height:1px;background:#D9D6CF"></div>
<div class="t" style="left:620.5px;top:855.70px;letter-spacing:-0.05px">Mar/12/2020 09:53:54</div>
<div class="t" style="left:740.5px;top:855.70px;letter-spacing:-0.05px">memory</div>
<div class="t" style="left:800.5px;top:855.70px;letter-spacing:-0.05px">system, info, account</div>
<div class="t" style="left:915.5px;top:855.70px;letter-spacing:-0.05px">user dmsi logged out from 192.168.40.254 via telnet</div>
<div class="a" style="left:619px;top:869px;width:749px;height:1px;background:#D9D6CF"></div>
<div class="t" style="left:620.5px;top:870.70px;color:#1236F0;letter-spacing:-0.05px">Mar/12/2020 09:54:07</div>
<div class="t" style="left:740.5px;top:870.70px;color:#1236F0;letter-spacing:-0.05px">memory</div>
<div class="t" style="left:800.5px;top:870.70px;color:#1236F0;letter-spacing:-0.05px">interface, warning</div>
<div class="t" style="left:915.5px;top:870.70px;color:#1236F0;letter-spacing:-0.05px">bonding-switch-trunk: bridge port received packet with own address as source address</div>
<div class="t" style="left:915.5px;top:885.70px;color:#1236F0;letter-spacing:-0.05px">(c4:ad:34:a2:31:24), probably loop</div>
<div class="a" style="left:619px;top:899px;width:749px;height:1px;background:#D9D6CF"></div>
<div class="t" style="left:620.5px;top:900.70px;color:#1236F0;letter-spacing:-0.05px">Mar/12/2020 09:55:07</div>
<div class="t" style="left:740.5px;top:900.70px;color:#1236F0;letter-spacing:-0.05px">memory</div>
<div class="t" style="left:800.5px;top:900.70px;color:#1236F0;letter-spacing:-0.05px">interface, warning</div>
<div class="t" style="left:915.5px;top:900.70px;color:#1236F0;letter-spacing:-0.05px">bonding-switch-trunk: bridge port received packet with own address as source address</div>
<div class="t" style="left:915.5px;top:915.70px;color:#1236F0;letter-spacing:-0.05px">(c4:ad:34:a2:31:24), probably loop</div>
<div class="a" style="left:619px;top:929px;width:749px;height:1px;background:#D9D6CF"></div>
<div class="t" style="left:620.5px;top:930.70px;letter-spacing:-0.05px">Mar/12/2020 09:55:14</div>
<div class="t" style="left:740.5px;top:930.70px;letter-spacing:-0.05px">memory</div>
<div class="t" style="left:800.5px;top:930.70px;letter-spacing:-0.05px">system, info, account</div>
<div class="t" style="left:915.5px;top:930.70px;letter-spacing:-0.05px">user dmsi logged in from 192.168.40.254 via winbox</div>
<div class="a" style="left:619px;top:944px;width:749px;height:1px;background:#D9D6CF"></div>
<div class="t" style="left:620.5px;top:945.70px;letter-spacing:-0.05px">Mar/12/2020 09:55:16</div>
<div class="t" style="left:740.5px;top:945.70px;letter-spacing:-0.05px">memory</div>
<div class="t" style="left:800.5px;top:945.70px;letter-spacing:-0.05px">system, info, account</div>
<div class="t" style="left:915.5px;top:945.70px;letter-spacing:-0.05px">user dmsi logged in from 192.168.40.254 via telnet</div>
<div class="a" style="left:619px;top:959px;width:749px;height:1px;background:#D9D6CF"></div>
<div class="t" style="left:620.5px;top:960.70px;letter-spacing:-0.05px">Mar/12/2020 09:56:51</div>
<div class="t" style="left:740.5px;top:960.70px;letter-spacing:-0.05px">memory</div>
<div class="t" style="left:800.5px;top:960.70px;letter-spacing:-0.05px">system, info</div>
<div class="t" style="left:915.5px;top:960.70px;letter-spacing:-0.05px">bridge port changed by dmsi</div>
<div class="a" style="left:619px;top:974px;width:749px;height:1px;background:#D9D6CF"></div>
<div class="a" style="left:738px;top:555px;width:1px;height:411px;background:#D9D6CF"></div>
<div class="a" style="left:798px;top:555px;width:1px;height:411px;background:#D9D6CF"></div>
<div class="a" style="left:913px;top:555px;width:1px;height:411px;background:#D9D6CF"></div>
</div>
<div class="a" style="left:0;top:0;width:1368px;height:966px;z-index:3">
<div class="a" style="left:154px;top:373px;width:598px;height:394px;border:1px solid #000;background:#DEDBD5"></div>
<div class="a" style="left:155px;top:374px;width:596px;height:392px;border-top:1px solid #E2DFDA;border-left:1px solid #F2F0EC;border-right:1px solid #9A9894;border-bottom:1px solid #9A9894"></div>
<div class="a" style="left:155px;top:374px;width:597px;height:22px;background:#B9B6B0;border-top:1px solid #E2DFDA;border-left:1px solid #E2DFDA;box-sizing:border-box"></div>
<div class="t" style="left:159.8px;top:380.70px;color:#fff">Interface List</div>
<div class="a" style="left:219.5px;top:401px;width:76.5px;height:22px;background:#CBC8C2;border-top:1px solid #E6E3DE;border-left:1px solid #E6E3DE;border-right:1px solid #B4B1AB;box-sizing:border-box;width:77.5px"></div>
<div class="t" style="left:58.25px;width:400px;text-align:center;top:405.70px;">Interface List</div>
<div class="a" style="left:297px;top:401px;width:55px;height:22px;background:#CBC8C2;border-top:1px solid #E6E3DE;border-left:1px solid #E6E3DE;border-right:1px solid #B4B1AB;box-sizing:border-box;width:56px"></div>
<div class="t" style="left:125.0px;width:400px;text-align:center;top:405.70px;">Ethernet</div>
<div class="a" style="left:353px;top:401px;width:70px;height:22px;background:#CBC8C2;border-top:1px solid #E6E3DE;border-left:1px solid #E6E3DE;border-right:1px solid #B4B1AB;box-sizing:border-box;width:71px"></div>
<div class="t" style="left:188.5px;width:400px;text-align:center;top:405.70px;">EoIP Tunnel</div>
<div class="a" style="left:424px;top:401px;width:58px;height:22px;background:#CBC8C2;border-top:1px solid #E6E3DE;border-left:1px solid #E6E3DE;border-right:1px solid #B4B1AB;box-sizing:border-box;width:59px"></div>
<div class="t" style="left:253.5px;width:400px;text-align:center;top:405.70px;">IP Tunnel</div>
<div class="a" style="left:483px;top:401px;width:68px;height:22px;background:#CBC8C2;border-top:1px solid #E6E3DE;border-left:1px solid #E6E3DE;border-right:1px solid #B4B1AB;box-sizing:border-box;width:69px"></div>
<div class="t" style="left:317.5px;width:400px;text-align:center;top:405.70px;">GRE Tunnel</div>
<div class="a" style="left:552px;top:401px;width:38px;height:22px;background:#CBC8C2;border-top:1px solid #E6E3DE;border-left:1px solid #E6E3DE;border-right:1px solid #B4B1AB;box-sizing:border-box;width:39px"></div>
<div class="t" style="left:371.5px;width:400px;text-align:center;top:405.70px;">VLAN</div>
<div class="a" style="left:591px;top:401px;width:39px;height:22px;background:#CBC8C2;border-top:1px solid #E6E3DE;border-left:1px solid #E6E3DE;border-right:1px solid #B4B1AB;box-sizing:border-box;width:40px"></div>
<div class="t" style="left:411.0px;width:400px;text-align:center;top:405.70px;">VRRP</div>
<div class="a" style="left:631px;top:401px;width:51px;height:22px;background:#CBC8C2;border-top:1px solid #E6E3DE;border-left:1px solid #E6E3DE;border-right:1px solid #B4B1AB;box-sizing:border-box;width:52px"></div>
<div class="t" style="left:457.0px;width:400px;text-align:center;top:405.70px;">Bonding</div>
<div class="a" style="left:683px;top:401px;width:30px;height:22px;background:#CBC8C2;border-top:1px solid #E6E3DE;border-left:1px solid #E6E3DE;border-right:1px solid #B4B1AB;box-sizing:border-box;width:31px"></div>
<div class="t" style="left:498.5px;width:400px;text-align:center;top:405.70px;">LTE</div>
<div class="a" style="left:714px;top:401px;width:45px;height:22px;background:#CBC8C2;border-top:1px solid #E6E3DE;border-left:1px solid #E6E3DE;border-right:1px solid #B4B1AB;box-sizing:border-box;width:46px"></div>
<div class="t" style="left:537.0px;width:400px;text-align:center;top:405.70px;"></div>
<div class="a" style="left:159px;top:398px;width:60.5px;height:26px;background:#DEDBD5;border-top:1px solid #fff;border-left:1px solid #fff;border-right:1px solid #A9A6A0;box-sizing:border-box;z-index:1"></div>
<div class="t" style="left:-10.75px;width:400px;text-align:center;top:404.20px;z-index:1">Interface</div>
<div class="a" style="left:157px;top:423px;width:603px;height:343px;border-top:1px solid #fff;border-left:1px solid #fff;border-right:1px solid #A09D97;border-bottom:1px solid #A09D97;box-sizing:border-box"></div>
<div class="a btn" style="left:159px;top:427px;width:29px;height:21px;border-color:#8E8C88;"></div>
<svg class="a" style="left:164px;top:432px" width="12" height="12" viewBox="0 0 12 12"><path d="M4.5 0.5h3v4h4v3h-4v4h-3v-4h-4v-3h4z" fill="#1E3CF0" stroke="#001" stroke-width="1"/></svg>
<svg class="a" style="left:180px;top:437px" width="7" height="4" viewBox="0 0 7 4"><path d="M0 0h7L3.5 4z" fill="#000"/></svg>
<div class="a btn" style="left:193px;top:427px;width:20px;height:21px;border-color:#8E8C88;"></div>
<div class="a btn" style="left:223px;top:427px;width:20px;height:21px;border-color:#8E8C88;"></div>
<div class="a btn" style="left:248px;top:427px;width:20px;height:21px;border-color:#8E8C88;"></div>
<div class="a btn" style="left:278px;top:427px;width:20px;height:21px;border-color:#8E8C88;"></div>
<div class="a btn" style="left:308px;top:427px;width:20px;height:21px;border-color:#8E8C88;"></div>
<svg class="a" style="left:197.5px;top:436px" width="13" height="5" viewBox="0 0 13 5"><rect x="0.5" y="0.5" width="12" height="4" fill="#F04020" stroke="#000" stroke-width="1"/></svg>
<svg class="a" style="left:227px;top:432.5px" width="14" height="12" viewBox="0 0 14 12"><path d="M2 6l3 4 7-8" stroke="#000" stroke-width="3.8" fill="none" stroke-linejoin="miter"/><path d="M2 6l3 4 7-8" stroke="#1E3CF0" stroke-width="2.2" fill="none"/></svg>
<svg class="a" style="left:252px;top:432px" width="13" height="13" viewBox="0 0 13 13"><path d="M2 2l9 9M11 2l-9 9" stroke="#000" stroke-width="3.8"/><path d="M2 2l9 9M11 2l-9 9" stroke="#F04020" stroke-width="2.2"/></svg>
<svg class="a" style="left:281.5px;top:433.5px" width="14" height="10" viewBox="0 0 14 10"><path d="M3 0.5h10.5v9H0.5v-6z" fill="#F8F460" stroke="#000"/><path d="M0.5 3.5h2.5v-3" fill="none" stroke="#000"/><path d="M5 3h6M3 5h8" stroke="#ccc" stroke-dasharray="1.5 1"/></svg>
<svg class="a" style="left:313px;top:432px" width="12" height="13" viewBox="0 0 12 13"><path d="M0.5 0.5h11L7 6v7H5V6z" fill="#B8C4DC" stroke="#111" stroke-width="1"/><path d="M2.5 1.5h7L6 5.5z" fill="#E8EEF8"/><path d="M5.5 6v6" stroke="#8090B0"/></svg>
<div class="a btn" style="left:338px;top:427px;width:90px;height:21px;border-color:#8E8C88;"></div>
<div class="t" style="left:184.0px;width:400px;text-align:center;top:432.70px;">Detect Internet</div>
<div class="a inp" style="left:692px;top:430px;width:58px;height:15px;background:#fff"></div>
<div class="t" style="left:696px;top:432.70px;color:#A09E9A;font-style:italic">Find</div>
<div class="a" style="left:161px;top:471px;width:599px;height:257px;background:#fff"></div>
<div class="a" style="left:161px;top:471px;width:599px;height:15px;background:#B0CAEA"></div>
<div class="a" style="left:161px;top:486px;width:599px;height:1px;background:#D9D6CF"></div>
<div class="a" style="left:161px;top:502px;width:599px;height:1px;background:#D9D6CF"></div>
<div class="a" style="left:161px;top:518px;width:599px;height:1px;background:#D9D6CF"></div>
<div class="a" style="left:161px;top:534px;width:599px;height:1px;background:#D9D6CF"></div>
<div class="a" style="left:161px;top:550px;width:599px;height:1px;background:#D9D6CF"></div>
<div class="a" style="left:161px;top:566px;width:599px;height:1px;background:#D9D6CF"></div>
<div class="a" style="left:161px;top:582px;width:599px;height:1px;background:#D9D6CF"></div>
<div class="a" style="left:161px;top:598px;width:599px;height:1px;background:#D9D6CF"></div>
<div class="a" style="left:161px;top:614px;width:599px;height:1px;background:#D9D6CF"></div>
<div class="a" style="left:161px;top:630px;width:599px;height:1px;background:#D9D6CF"></div>
<div class="a" style="left:161px;top:646px;width:599px;height:1px;background:#D9D6CF"></div>
<div class="a" style="left:161px;top:662px;width:599px;height:1px;background:#D9D6CF"></div>
<div class="a" style="left:161px;top:678px;width:599px;height:1px;background:#D9D6CF"></div>
<div class="a" style="left:161px;top:694px;width:599px;height:1px;background:#D9D6CF"></div>
<div class="a" style="left:161px;top:710px;width:599px;height:1px;background:#D9D6CF"></div>
<div class="a" style="left:161px;top:726px;width:599px;height:1px;background:#D9D6CF"></div>
<div class="a" style="left:187px;top:471px;width:1px;height:256px;background:#D9D6CF"></div>
<div class="a" style="left:370px;top:471px;width:1px;height:256px;background:#D9D6CF"></div>
<div class="a" style="left:490px;top:471px;width:1px;height:256px;background:#D9D6CF"></div>
<div class="a" style="left:560.5px;top:471px;width:1px;height:256px;background:#D9D6CF"></div>
<div class="a" style="left:610px;top:471px;width:1px;height:256px;background:#D9D6CF"></div>
<div class="a" style="left:160px;top:453px;width:600px;height:18px;background:#DEDBD5;border-top:1px solid #8E8C88;border-bottom:1px solid #8E8C88;box-sizing:border-box"></div>
<div class="a" style="left:160px;top:453px;width:1px;height:18px;background:#8E8C88"></div>
<div class="a" style="left:161px;top:454px;width:599px;height:1px;background:#fff"></div>
<div class="a" style="left:161px;top:454px;width:1px;height:16px;background:#fff"></div>
<div class="a" style="left:186px;top:454px;width:1px;height:16px;background:#8E8C88"></div>
<div class="a" style="left:188px;top:454px;width:1px;height:16px;background:#fff"></div>
<div class="a" style="left:369px;top:454px;width:1px;height:16px;background:#8E8C88"></div>
<div class="clip" style="left:188px;top:454px;width:181px;height:16px">
<div class="t" style="left:1.5px;top:2.20px">Name</div>
</div>
<div class="a" style="left:371px;top:454px;width:1px;height:16px;background:#fff"></div>
<div class="a" style="left:489px;top:454px;width:1px;height:16px;background:#8E8C88"></div>
<div class="clip" style="left:371px;top:454px;width:118px;height:16px">
<div class="t" style="left:1.5px;top:2.20px">Type</div>
</div>
<div class="a" style="left:491px;top:454px;width:1px;height:16px;background:#fff"></div>
<div class="a" style="left:559.5px;top:454px;width:1px;height:16px;background:#8E8C88"></div>
<div class="clip" style="left:491px;top:454px;width:68.5px;height:16px">
<div class="t" style="left:1.5px;top:2.20px">Actual MTU</div>
</div>
<div class="a" style="left:561.5px;top:454px;width:1px;height:16px;background:#fff"></div>
<div class="a" style="left:609px;top:454px;width:1px;height:16px;background:#8E8C88"></div>
<div class="clip" style="left:561.5px;top:454px;width:47.5px;height:16px">
<div class="t" style="left:1.5px;top:2.20px">L2 MTU</div>
</div>
<div class="a" style="left:611px;top:454px;width:1px;height:16px;background:#fff"></div>
<div class="a" style="left:759px;top:454px;width:1px;height:16px;background:#8E8C88"></div>
<div class="clip" style="left:611px;top:454px;width:148px;height:16px">
<div class="t" style="left:1.5px;top:2.20px">Tx</div>
</div>
<svg class="a" style="left:360px;top:458px" width="8" height="7" viewBox="0 0 8 7"><path d="M4 0.5L7.5 6.5H0.5z" fill="none" stroke="#fff"/><path d="M4 0.5L0.5 6.5" stroke="#999"/></svg>
<div class="t" style="left:161.5px;top:471.70px;">RS</div>
<svg class="a" style="left:189px;top:473px" width="14" height="11" viewBox="0 0 14 11" shape-rendering="crispEdges"><rect x="5" y="0" width="1" height="1" fill="#000"/><rect x="8" y="0" width="1" height="1" fill="#000"/><rect x="4" y="1" width="2" height="1" fill="#000"/><rect x="8" y="1" width="2" height="1" fill="#000"/><rect x="3" y="2" width="1" height="1" fill="#000"/><rect x="4" y="2" width="1" height="1" fill="#fff"/><rect x="5" y="2" width="1" height="1" fill="#000"/><rect x="8" y="2" width="1" height="1" fill="#000"/><rect x="9" y="2" width="1" height="1" fill="#fff"/><rect x="10" y="2" width="1" height="1" fill="#000"/><rect x="2" y="3" width="1" height="1" fill="#000"/><rect x="3" y="3" width="1" height="1" fill="#fff"/><rect x="4" y="3" width="1" height="1" fill="#70FCFC"/><rect x="5" y="3" width="1" height="1" fill="#000"/><rect x="8" y="3" width="1" height="1" fill="#000"/><rect x="9" y="3" width="1" height="1" fill="#fff"/><rect x="10" y="3" width="1" height="1" fill="#70FCFC"/><rect x="11" y="3" width="1" height="1" fill="#000"/><rect x="1" y="4" width="1" height="1" fill="#000"/><rect x="2" y="4" width="1" height="1" fill="#fff"/><rect x="3" y="4" width="1" height="1" fill="#70FCFC"/><rect x="4" y="4" width="1" height="1" fill="#000"/><rect x="5" y="4" width="1" height="1" fill="#70FCFC"/><rect x="6" y="4" width="2" height="1" fill="#000"/><rect x="8" y="4" width="1" height="1" fill="#70FCFC"/><rect x="9" y="4" width="1" height="1" fill="#000"/><rect x="10" y="4" width="2" height="1" fill="#70FCFC"/><rect x="12" y="4" width="1" height="1" fill="#000"/><rect x="0" y="5" width="1" height="1" fill="#000"/><rect x="1" y="5" width="1" height="1" fill="#fff"/><rect x="2" y="5" width="1" height="1" fill="#70FCFC"/><rect x="3" y="5" width="1" height="1" fill="#000"/><rect x="4" y="5" width="9" height="1" fill="#70FCFC"/><rect x="13" y="5" width="1" height="1" fill="#000"/><rect x="1" y="6" width="1" height="1" fill="#000"/><rect x="2" y="6" width="2" height="1" fill="#70FCFC"/><rect x="4" y="6" width="1" height="1" fill="#000"/><rect x="5" y="6" width="1" height="1" fill="#70FCFC"/><rect x="6" y="6" width="2" height="1" fill="#000"/><rect x="8" y="6" width="1" height="1" fill="#70FCFC"/><rect x="9" y="6" width="1" height="1" fill="#000"/><rect x="10" y="6" width="2" height="1" fill="#70FCFC"/><rect x="12" y="6" width="1" height="1" fill="#000"/><rect x="2" y="7" width="1" height="1" fill="#000"/><rect x="3" y="7" width="2" height="1" fill="#70FCFC"/><rect x="5" y="7" width="1" height="1" fill="#000"/><rect x="8" y="7" width="1" height="1" fill="#000"/><rect x="9" y="7" width="2" height="1" fill="#70FCFC"/><rect x="11" y="7" width="1" height="1" fill="#000"/><rect x="3" y="8" width="1" height="1" fill="#000"/><rect x="4" y="8" width="1" height="1" fill="#70FCFC"/><rect x="5" y="8" width="1" height="1" fill="#000"/><rect x="8" y="8" width="1" height="1" fill="#000"/><rect x="9" y="8" width="1" height="1" fill="#70FCFC"/><rect x="10" y="8" width="1" height="1" fill="#000"/><rect x="4" y="9" width="2" height="1" fill="#000"/><rect x="8" y="9" width="2" height="1" fill="#000"/><rect x="5" y="10" width="1" height="1" fill="#000"/><rect x="8" y="10" width="1" height="1" fill="#000"/></svg>
<div class="t" style="left:205.5px;top:471.70px;">bonding-host1</div>
<div class="t" style="left:372px;top:471.70px;">Bonding</div>
<div class="t" style="right:811px;top:471.70px;">1500</div>
<div class="t" style="right:761.5px;top:471.70px;">1592</div>
<div class="t" style="right:641px;top:471.70px;">20.3 kbps</div>
<div class="t" style="left:161.5px;top:487.70px;">RS</div>
<svg class="a" style="left:189px;top:489px" width="14" height="11" viewBox="0 0 14 11" shape-rendering="crispEdges"><rect x="5" y="0" width="1" height="1" fill="#000"/><rect x="8" y="0" width="1" height="1" fill="#000"/><rect x="4" y="1" width="2" height="1" fill="#000"/><rect x="8" y="1" width="2" height="1" fill="#000"/><rect x="3" y="2" width="1" height="1" fill="#000"/><rect x="4" y="2" width="1" height="1" fill="#fff"/><rect x="5" y="2" width="1" height="1" fill="#000"/><rect x="8" y="2" width="1" height="1" fill="#000"/><rect x="9" y="2" width="1" height="1" fill="#fff"/><rect x="10" y="2" width="1" height="1" fill="#000"/><rect x="2" y="3" width="1" height="1" fill="#000"/><rect x="3" y="3" width="1" height="1" fill="#fff"/><rect x="4" y="3" width="1" height="1" fill="#70FCFC"/><rect x="5" y="3" width="1" height="1" fill="#000"/><rect x="8" y="3" width="1" height="1" fill="#000"/><rect x="9" y="3" width="1" height="1" fill="#fff"/><rect x="10" y="3" width="1" height="1" fill="#70FCFC"/><rect x="11" y="3" width="1" height="1" fill="#000"/><rect x="1" y="4" width="1" height="1" fill="#000"/><rect x="2" y="4" width="1" height="1" fill="#fff"/><rect x="3" y="4" width="1" height="1" fill="#70FCFC"/><rect x="4" y="4" width="1" height="1" fill="#000"/><rect x="5" y="4" width="1" height="1" fill="#70FCFC"/><rect x="6" y="4" width="2" height="1" fill="#000"/><rect x="8" y="4" width="1" height="1" fill="#70FCFC"/><rect x="9" y="4" width="1" height="1" fill="#000"/><rect x="10" y="4" width="2" height="1" fill="#70FCFC"/><rect x="12" y="4" width="1" height="1" fill="#000"/><rect x="0" y="5" width="1" height="1" fill="#000"/><rect x="1" y="5" width="1" height="1" fill="#fff"/><rect x="2" y="5" width="1" height="1" fill="#70FCFC"/><rect x="3" y="5" width="1" height="1" fill="#000"/><rect x="4" y="5" width="9" height="1" fill="#70FCFC"/><rect x="13" y="5" width="1" height="1" fill="#000"/><rect x="1" y="6" width="1" height="1" fill="#000"/><rect x="2" y="6" width="2" height="1" fill="#70FCFC"/><rect x="4" y="6" width="1" height="1" fill="#000"/><rect x="5" y="6" width="1" height="1" fill="#70FCFC"/><rect x="6" y="6" width="2" height="1" fill="#000"/><rect x="8" y="6" width="1" height="1" fill="#70FCFC"/><rect x="9" y="6" width="1" height="1" fill="#000"/><rect x="10" y="6" width="2" height="1" fill="#70FCFC"/><rect x="12" y="6" width="1" height="1" fill="#000"/><rect x="2" y="7" width="1" height="1" fill="#000"/><rect x="3" y="7" width="2" height="1" fill="#70FCFC"/><rect x="5" y="7" width="1" height="1" fill="#000"/><rect x="8" y="7" width="1" height="1" fill="#000"/><rect x="9" y="7" width="2" height="1" fill="#70FCFC"/><rect x="11" y="7" width="1" height="1" fill="#000"/><rect x="3" y="8" width="1" height="1" fill="#000"/><rect x="4" y="8" width="1" height="1" fill="#70FCFC"/><rect x="5" y="8" width="1" height="1" fill="#000"/><rect x="8" y="8" width="1" height="1" fill="#000"/><rect x="9" y="8" width="1" height="1" fill="#70FCFC"/><rect x="10" y="8" width="1" height="1" fill="#000"/><rect x="4" y="9" width="2" height="1" fill="#000"/><rect x="8" y="9" width="2" height="1" fill="#000"/><rect x="5" y="10" width="1" height="1" fill="#000"/><rect x="8" y="10" width="1" height="1" fill="#000"/></svg>
<div class="t" style="left:205.5px;top:487.70px;">bonding-host2</div>
<div class="t" style="left:372px;top:487.70px;">Bonding</div>
<div class="t" style="right:811px;top:487.70px;">1500</div>
<div class="t" style="right:761.5px;top:487.70px;">1592</div>
<div class="t" style="right:641px;top:487.70px;">20.3 kbps</div>
<div class="t" style="left:161.5px;top:503.70px;">RS</div>
<svg class="a" style="left:189px;top:505px" width="14" height="11" viewBox="0 0 14 11" shape-rendering="crispEdges"><rect x="5" y="0" width="1" height="1" fill="#000"/><rect x="8" y="0" width="1" height="1" fill="#000"/><rect x="4" y="1" width="2" height="1" fill="#000"/><rect x="8" y="1" width="2" height="1" fill="#000"/><rect x="3" y="2" width="1" height="1" fill="#000"/><rect x="4" y="2" width="1" height="1" fill="#fff"/><rect x="5" y="2" width="1" height="1" fill="#000"/><rect x="8" y="2" width="1" height="1" fill="#000"/><rect x="9" y="2" width="1" height="1" fill="#fff"/><rect x="10" y="2" width="1" height="1" fill="#000"/><rect x="2" y="3" width="1" height="1" fill="#000"/><rect x="3" y="3" width="1" height="1" fill="#fff"/><rect x="4" y="3" width="1" height="1" fill="#70FCFC"/><rect x="5" y="3" width="1" height="1" fill="#000"/><rect x="8" y="3" width="1" height="1" fill="#000"/><rect x="9" y="3" width="1" height="1" fill="#fff"/><rect x="10" y="3" width="1" height="1" fill="#70FCFC"/><rect x="11" y="3" width="1" height="1" fill="#000"/><rect x="1" y="4" width="1" height="1" fill="#000"/><rect x="2" y="4" width="1" height="1" fill="#fff"/><rect x="3" y="4" width="1" height="1" fill="#70FCFC"/><rect x="4" y="4" width="1" height="1" fill="#000"/><rect x="5" y="4" width="1" height="1" fill="#70FCFC"/><rect x="6" y="4" width="2" height="1" fill="#000"/><rect x="8" y="4" width="1" height="1" fill="#70FCFC"/><rect x="9" y="4" width="1" height="1" fill="#000"/><rect x="10" y="4" width="2" height="1" fill="#70FCFC"/><rect x="12" y="4" width="1" height="1" fill="#000"/><rect x="0" y="5" width="1" height="1" fill="#000"/><rect x="1" y="5" width="1" height="1" fill="#fff"/><rect x="2" y="5" width="1" height="1" fill="#70FCFC"/><rect x="3" y="5" width="1" height="1" fill="#000"/><rect x="4" y="5" width="9" height="1" fill="#70FCFC"/><rect x="13" y="5" width="1" height="1" fill="#000"/><rect x="1" y="6" width="1" height="1" fill="#000"/><rect x="2" y="6" width="2" height="1" fill="#70FCFC"/><rect x="4" y="6" width="1" height="1" fill="#000"/><rect x="5" y="6" width="1" height="1" fill="#70FCFC"/><rect x="6" y="6" width="2" height="1" fill="#000"/><rect x="8" y="6" width="1" height="1" fill="#70FCFC"/><rect x="9" y="6" width="1" height="1" fill="#000"/><rect x="10" y="6" width="2" height="1" fill="#70FCFC"/><rect x="12" y="6" width="1" height="1" fill="#000"/><rect x="2" y="7" width="1" height="1" fill="#000"/><rect x="3" y="7" width="2" height="1" fill="#70FCFC"/><rect x="5" y="7" width="1" height="1" fill="#000"/><rect x="8" y="7" width="1" height="1" fill="#000"/><rect x="9" y="7" width="2" height="1" fill="#70FCFC"/><rect x="11" y="7" width="1" height="1" fill="#000"/><rect x="3" y="8" width="1" height="1" fill="#000"/><rect x="4" y="8" width="1" height="1" fill="#70FCFC"/><rect x="5" y="8" width="1" height="1" fill="#000"/><rect x="8" y="8" width="1" height="1" fill="#000"/><rect x="9" y="8" width="1" height="1" fill="#70FCFC"/><rect x="10" y="8" width="1" height="1" fill="#000"/><rect x="4" y="9" width="2" height="1" fill="#000"/><rect x="8" y="9" width="2" height="1" fill="#000"/><rect x="5" y="10" width="1" height="1" fill="#000"/><rect x="8" y="10" width="1" height="1" fill="#000"/></svg>
<div class="t" style="left:205.5px;top:503.70px;">bonding-switch-trunk</div>
<div class="t" style="left:372px;top:503.70px;">Bonding</div>
<div class="t" style="right:811px;top:503.70px;">1500</div>
<div class="t" style="right:761.5px;top:503.70px;">1592</div>
<div class="t" style="right:641px;top:503.70px;">3.4 kbps</div>
<div class="t" style="left:161.5px;top:519.70px;">R</div>
<svg class="a" style="left:189px;top:522px" width="15" height="9" viewBox="0 0 15 9" shape-rendering="crispEdges"><rect x="3" y="0" width="1" height="1" fill="#000"/><rect x="11" y="0" width="1" height="1" fill="#000"/><rect x="3" y="1" width="1" height="1" fill="#000"/><rect x="11" y="1" width="1" height="1" fill="#000"/><rect x="2" y="2" width="4" height="1" fill="#000"/><rect x="9" y="2" width="4" height="1" fill="#000"/><rect x="2" y="3" width="2" height="1" fill="#000"/><rect x="6" y="3" width="3" height="1" fill="#000"/><rect x="11" y="3" width="2" height="1" fill="#000"/><rect x="1" y="4" width="1" height="1" fill="#000"/><rect x="3" y="4" width="1" height="1" fill="#000"/><rect x="11" y="4" width="1" height="1" fill="#000"/><rect x="13" y="4" width="1" height="1" fill="#000"/><rect x="0" y="5" width="1" height="1" fill="#000"/><rect x="3" y="5" width="1" height="1" fill="#000"/><rect x="11" y="5" width="1" height="1" fill="#000"/><rect x="14" y="5" width="1" height="1" fill="#000"/><rect x="3" y="6" width="1" height="1" fill="#000"/><rect x="11" y="6" width="1" height="1" fill="#000"/><rect x="2" y="7" width="11" height="1" fill="#8E1A08"/><rect x="1" y="8" width="4" height="1" fill="#8E1A08"/><rect x="10" y="8" width="4" height="1" fill="#8E1A08"/></svg>
<div class="t" style="left:205.5px;top:519.70px;">bridge</div>
<div class="t" style="left:372px;top:519.70px;">Bridge</div>
<div class="t" style="right:811px;top:519.70px;">1500</div>
<div class="t" style="right:761.5px;top:519.70px;">1592</div>
<div class="t" style="right:641px;top:519.70px;">103.6 kbps</div>
<div class="t" style="left:161.5px;top:535.70px;">RS</div>
<div class="t" style="left:205.5px;top:535.70px;">ether1</div>
<div class="t" style="left:372px;top:535.70px;">Ethernet</div>
<div class="t" style="right:811px;top:535.70px;">1500</div>
<div class="t" style="right:761.5px;top:535.70px;">1592</div>
<div class="t" style="right:641px;top:535.70px;">11.0 kbps</div>
<div class="t" style="left:161.5px;top:551.70px;">RS</div>
<div class="t" style="left:205.5px;top:551.70px;">ether2</div>
<div class="t" style="left:372px;top:551.70px;">Ethernet</div>
<div class="t" style="right:811px;top:551.70px;">1500</div>
<div class="t" style="right:761.5px;top:551.70px;">1592</div>
<div class="t" style="right:641px;top:551.70px;">11.0 kbps</div>
<div class="t" style="left:161.5px;top:567.70px;">RS</div>
<div class="t" style="left:205.5px;top:567.70px;">ether3</div>
<div class="t" style="left:372px;top:567.70px;">Ethernet</div>
<div class="t" style="right:811px;top:567.70px;">1500</div>
<div class="t" style="right:761.5px;top:567.70px;">1592</div>
<div class="t" style="right:641px;top:567.70px;">11.0 kbps</div>
<div class="t" style="left:161.5px;top:583.70px;">RS</div>
<div class="t" style="left:205.5px;top:583.70px;">ether4</div>
<div class="t" style="left:372px;top:583.70px;">Ethernet</div>
<div class="t" style="right:811px;top:583.70px;">1500</div>
<div class="t" style="right:761.5px;top:583.70px;">1592</div>
<div class="t" style="right:641px;top:583.70px;">11.0 kbps</div>
<div class="t" style="left:161.5px;top:599.70px;"></div>
<div class="t" style="left:205.5px;top:599.70px;">ether5</div>
<div class="t" style="left:372px;top:599.70px;">Ethernet</div>
<div class="t" style="right:811px;top:599.70px;">1500</div>
<div class="t" style="right:761.5px;top:599.70px;">1592</div>
<div class="t" style="right:641px;top:599.70px;">0 bps</div>
<div class="t" style="left:161.5px;top:615.70px;"></div>
<div class="t" style="left:205.5px;top:615.70px;">ether6</div>
<div class="t" style="left:372px;top:615.70px;">Ethernet</div>
<div class="t" style="right:811px;top:615.70px;">1500</div>
<div class="t" style="right:761.5px;top:615.70px;">1592</div>
<div class="t" style="right:641px;top:615.70px;">0 bps</div>
<div class="t" style="left:161.5px;top:631.70px;"></div>
<div class="t" style="left:205.5px;top:631.70px;">ether7</div>
<div class="t" style="left:372px;top:631.70px;">Ethernet</div>
<div class="t" style="right:811px;top:631.70px;">1500</div>
<div class="t" style="right:761.5px;top:631.70px;">1592</div>
<div class="t" style="right:641px;top:631.70px;">0 bps</div>
<div class="t" style="left:161.5px;top:647.70px;"></div>
<div class="t" style="left:205.5px;top:647.70px;">ether8</div>
<div class="t" style="left:372px;top:647.70px;">Ethernet</div>
<div class="t" style="right:811px;top:647.70px;">1500</div>
<div class="t" style="right:761.5px;top:647.70px;">1592</div>
<div class="t" style="right:641px;top:647.70px;">0 bps</div>
<div class="t" style="left:161.5px;top:663.70px;"></div>
<div class="t" style="left:205.5px;top:663.70px;">ether9</div>
<div class="t" style="left:372px;top:663.70px;">Ethernet</div>
<div class="t" style="right:811px;top:663.70px;">1500</div>
<div class="t" style="right:761.5px;top:663.70px;">1592</div>
<div class="t" style="right:641px;top:663.70px;">0 bps</div>
<div class="t" style="left:161.5px;top:679.70px;"></div>
<div class="t" style="left:205.5px;top:679.70px;">ether10</div>
<div class="t" style="left:372px;top:679.70px;">Ethernet</div>
<div class="t" style="right:811px;top:679.70px;">1500</div>
<div class="t" style="right:761.5px;top:679.70px;">1592</div>
<div class="t" style="right:641px;top:679.70px;">0 bps</div>
<div class="t" style="left:161.5px;top:695.70px;"></div>
<div class="t" style="left:205.5px;top:695.70px;">ether11</div>
<div class="t" style="left:372px;top:695.70px;">Ethernet</div>
<div class="t" style="right:811px;top:695.70px;">1500</div>
<div class="t" style="right:761.5px;top:695.70px;">1592</div>
<div class="t" style="right:641px;top:695.70px;">0 bps</div>
<div class="t" style="left:161.5px;top:711.70px;"></div>
<div class="t" style="left:205.5px;top:711.70px;">ether12</div>
<div class="t" style="left:372px;top:711.70px;">Ethernet</div>
<div class="t" style="right:811px;top:711.70px;">1500</div>
<div class="t" style="right:761.5px;top:711.70px;">1592</div>
<div class="t" style="right:641px;top:711.70px;">0 bps</div>
<div class="a" style="left:161px;top:728px;width:600px;height:16px;background:#C9C6C0;border-top:1px solid #A6A39D;border-bottom:1px solid #8E8C88;box-sizing:border-box"></div>
</div>
<div class="a" style="left:0;top:0;width:1368px;height:966px;z-index:4">
<div class="a" style="left:152px;top:45px;width:550px;height:324px;border:1px solid #000;background:#DEDBD5"></div>
<div class="a" style="left:153px;top:46px;width:548px;height:322px;border-top:1px solid #E2DFDA;border-left:1px solid #F2F0EC;border-right:1px solid #9A9894;border-bottom:1px solid #9A9894"></div>
<div class="a" style="left:153px;top:46px;width:549px;height:22px;background:#B9B6B0;border-top:1px solid #E2DFDA;border-left:1px solid #E2DFDA;box-sizing:border-box"></div>
<div class="t" style="left:157.8px;top:52.70px;color:#fff">Bridge</div>
<div class="a" style="left:667px;top:50px;width:13px;height:13px;border:1px solid #555;background:#DEDBD5;box-shadow:inset 1px 1px 0 #fff"></div>
<div class="a" style="left:670px;top:53px;width:7px;height:6px;border:1px solid #444;border-top-width:2px"></div>
<div class="a" style="left:684px;top:50px;width:13px;height:13px;border:1px solid #555;background:#DEDBD5;box-shadow:inset 1px 1px 0 #fff"></div>
<svg class="a" style="left:688px;top:54px" width="7" height="7" viewBox="0 0 7 7" shape-rendering="crispEdges"><rect x="0" y="0" width="2" height="1" fill="#444"/><rect x="5" y="0" width="2" height="1" fill="#444"/><rect x="0" y="1" width="3" height="1" fill="#444"/><rect x="4" y="1" width="3" height="1" fill="#444"/><rect x="1" y="2" width="5" height="1" fill="#444"/><rect x="2" y="3" width="3" height="1" fill="#444"/><rect x="1" y="4" width="5" height="1" fill="#444"/><rect x="0" y="5" width="3" height="1" fill="#444"/><rect x="4" y="5" width="3" height="1" fill="#444"/><rect x="0" y="6" width="2" height="1" fill="#444"/><rect x="5" y="6" width="2" height="1" fill="#444"/></svg>
<div class="a" style="left:159px;top:73px;width:41px;height:22px;background:#CBC8C2;border-top:1px solid #E6E3DE;border-left:1px solid #E6E3DE;border-right:1px solid #B4B1AB;box-sizing:border-box;width:42px"></div>
<div class="t" style="left:-20.0px;width:400px;text-align:center;top:77.70px;">Bridge</div>
<div class="a" style="left:242px;top:73px;width:42px;height:22px;background:#CBC8C2;border-top:1px solid #E6E3DE;border-left:1px solid #E6E3DE;border-right:1px solid #B4B1AB;box-sizing:border-box;width:43px"></div>
<div class="t" style="left:63.5px;width:400px;text-align:center;top:77.70px;">VLANs</div>
<div class="a" style="left:285px;top:73px;width:42px;height:22px;background:#CBC8C2;border-top:1px solid #E6E3DE;border-left:1px solid #E6E3DE;border-right:1px solid #B4B1AB;box-sizing:border-box;width:43px"></div>
<div class="t" style="left:106.5px;width:400px;text-align:center;top:77.70px;">MSTIs</div>
<div class="a" style="left:328px;top:73px;width:106px;height:22px;background:#CBC8C2;border-top:1px solid #E6E3DE;border-left:1px solid #E6E3DE;border-right:1px solid #B4B1AB;box-sizing:border-box;width:107px"></div>
<div class="t" style="left:181.5px;width:400px;text-align:center;top:77.70px;">Port MST Overrides</div>
<div class="a" style="left:435px;top:73px;width:41px;height:22px;background:#CBC8C2;border-top:1px solid #E6E3DE;border-left:1px solid #E6E3DE;border-right:1px solid #B4B1AB;box-sizing:border-box;width:42px"></div>
<div class="t" style="left:256.0px;width:400px;text-align:center;top:77.70px;">Filters</div>
<div class="a" style="left:477px;top:73px;width:34px;height:22px;background:#CBC8C2;border-top:1px solid #E6E3DE;border-left:1px solid #E6E3DE;border-right:1px solid #B4B1AB;box-sizing:border-box;width:35px"></div>
<div class="t" style="left:294.5px;width:400px;text-align:center;top:77.70px;">NAT</div>
<div class="a" style="left:512px;top:73px;width:40px;height:22px;background:#CBC8C2;border-top:1px solid #E6E3DE;border-left:1px solid #E6E3DE;border-right:1px solid #B4B1AB;box-sizing:border-box;width:41px"></div>
<div class="t" style="left:332.5px;width:400px;text-align:center;top:77.70px;">Hosts</div>
<div class="a" style="left:553px;top:73px;width:34px;height:22px;background:#CBC8C2;border-top:1px solid #E6E3DE;border-left:1px solid #E6E3DE;border-right:1px solid #B4B1AB;box-sizing:border-box;width:35px"></div>
<div class="t" style="left:370.5px;width:400px;text-align:center;top:77.70px;">MDB</div>
<div class="a" style="left:201px;top:70px;width:41px;height:26px;background:#DEDBD5;border-top:1px solid #fff;border-left:1px solid #fff;border-right:1px solid #A9A6A0;box-sizing:border-box;z-index:1"></div>
<div class="t" style="left:21.5px;width:400px;text-align:center;top:76.20px;z-index:1">Ports</div>
<div class="a" style="left:155px;top:95px;width:545px;height:272px;border-top:1px solid #fff;border-left:1px solid #fff;border-right:1px solid #A09D97;border-bottom:1px solid #A09D97;box-sizing:border-box"></div>
<div class="a btn" style="left:157px;top:99px;width:20px;height:21px;border-color:#8E8C88;"></div>
<div class="a btn" style="left:182px;top:99px;width:20px;height:21px;border-color:#8E8C88;"></div>
<div class="a btn" style="left:212px;top:99px;width:20px;height:21px;border-color:#8E8C88;"></div>
<div class="a btn" style="left:237px;top:99px;width:20px;height:21px;border-color:#8E8C88;"></div>
<div class="a btn" style="left:267px;top:99px;width:20px;height:21px;border-color:#8E8C88;"></div>
<div class="a btn" style="left:297px;top:99px;width:20px;height:21px;border-color:#8E8C88;"></div>
<svg class="a" style="left:162px;top:105px" width="12" height="12" viewBox="0 0 12 12"><path d="M4.5 0.5h3v4h4v3h-4v4h-3v-4h-4v-3h4z" fill="#1E3CF0" stroke="#001" stroke-width="1"/></svg>
<svg class="a" style="left:186.5px;top:108.5px" width="13" height="5" viewBox="0 0 13 5"><rect x="0.5" y="0.5" width="12" height="4" fill="#F04020" stroke="#000" stroke-width="1"/></svg>
<svg class="a" style="left:216px;top:105px" width="14" height="12" viewBox="0 0 14 12"><path d="M2 6l3 4 7-8" stroke="#000" stroke-width="3.8" fill="none" stroke-linejoin="miter"/><path d="M2 6l3 4 7-8" stroke="#1E3CF0" stroke-width="2.2" fill="none"/></svg>
<svg class="a" style="left:241px;top:105px" width="13" height="13" viewBox="0 0 13 13"><path d="M2 2l9 9M11 2l-9 9" stroke="#000" stroke-width="3.8"/><path d="M2 2l9 9M11 2l-9 9" stroke="#F04020" stroke-width="2.2"/></svg>
<svg class="a" style="left:270.5px;top:106px" width="14" height="10" viewBox="0 0 14 10"><path d="M3 0.5h10.5v9H0.5v-6z" fill="#F8F460" stroke="#000"/><path d="M0.5 3.5h2.5v-3" fill="none" stroke="#000"/><path d="M5 3h6M3 5h8" stroke="#ccc" stroke-dasharray="1.5 1"/></svg>
<svg class="a" style="left:302px;top:105px" width="12" height="13" viewBox="0 0 12 13"><path d="M0.5 0.5h11L7 6v7H5V6z" fill="#B8C4DC" stroke="#111" stroke-width="1"/><path d="M2.5 1.5h7L6 5.5z" fill="#E8EEF8"/><path d="M5.5 6v6" stroke="#8090B0"/></svg>
<div class="a inp" style="left:642px;top:102px;width:54px;height:15px;background:#fff"></div>
<div class="t" style="left:646px;top:104.70px;color:#A09E9A;font-style:italic">Find</div>
<div class="a" style="left:158px;top:143px;width:524px;height:188px;background:#fff"></div>
<div class="a" style="left:158px;top:287px;width:524px;height:15px;background:#B0CAEA"></div>
<div class="a" style="left:158px;top:158px;width:524px;height:1px;background:#D9D6CF"></div>
<div class="a" style="left:158px;top:174px;width:524px;height:1px;background:#D9D6CF"></div>
<div class="a" style="left:158px;top:190px;width:524px;height:1px;background:#D9D6CF"></div>
<div class="a" style="left:158px;top:206px;width:524px;height:1px;background:#D9D6CF"></div>
<div class="a" style="left:158px;top:222px;width:524px;height:1px;background:#D9D6CF"></div>
<div class="a" style="left:158px;top:238px;width:524px;height:1px;background:#D9D6CF"></div>
<div class="a" style="left:158px;top:254px;width:524px;height:1px;background:#D9D6CF"></div>
<div class="a" style="left:158px;top:270px;width:524px;height:1px;background:#D9D6CF"></div>
<div class="a" style="left:158px;top:286px;width:524px;height:1px;background:#D9D6CF"></div>
<div class="a" style="left:158px;top:302px;width:524px;height:1px;background:#D9D6CF"></div>
<div class="a" style="left:158px;top:318px;width:524px;height:1px;background:#D9D6CF"></div>
<div class="a" style="left:181px;top:143px;width:1px;height:176px;background:#D9D6CF"></div>
<div class="a" style="left:209px;top:143px;width:1px;height:176px;background:#D9D6CF"></div>
<div class="a" style="left:395px;top:143px;width:1px;height:176px;background:#D9D6CF"></div>
<div class="a" style="left:495px;top:143px;width:1px;height:176px;background:#D9D6CF"></div>
<div class="a" style="left:540px;top:143px;width:1px;height:176px;background:#D9D6CF"></div>
<div class="a" style="left:585px;top:143px;width:1px;height:176px;background:#D9D6CF"></div>
<div class="a" style="left:645px;top:143px;width:1px;height:176px;background:#D9D6CF"></div>
<div class="a" style="left:157px;top:125px;width:541px;height:18px;background:#DEDBD5;border-top:1px solid #8E8C88;border-bottom:1px solid #8E8C88;box-sizing:border-box"></div>
<div class="a" style="left:157px;top:125px;width:1px;height:18px;background:#8E8C88"></div>
<div class="a" style="left:158px;top:126px;width:540px;height:1px;background:#fff"></div>
<div class="a" style="left:158px;top:126px;width:1px;height:16px;background:#fff"></div>
<div class="a" style="left:180px;top:126px;width:1px;height:16px;background:#8E8C88"></div>
<div class="clip" style="left:158px;top:126px;width:22px;height:16px">
<div class="t" style="left:0;width:100%;text-align:center;top:2.20px">#</div>
</div>
<div class="a" style="left:182px;top:126px;width:1px;height:16px;background:#fff"></div>
<div class="a" style="left:208px;top:126px;width:1px;height:16px;background:#8E8C88"></div>
<div class="a" style="left:210px;top:126px;width:1px;height:16px;background:#fff"></div>
<div class="a" style="left:394px;top:126px;width:1px;height:16px;background:#8E8C88"></div>
<div class="clip" style="left:210px;top:126px;width:184px;height:16px">
<div class="t" style="left:1.5px;top:2.20px">Interface</div>
</div>
<div class="a" style="left:396px;top:126px;width:1px;height:16px;background:#fff"></div>
<div class="a" style="left:494px;top:126px;width:1px;height:16px;background:#8E8C88"></div>
<div class="clip" style="left:396px;top:126px;width:98px;height:16px">
<div class="t" style="left:1.5px;top:2.20px">Bridge</div>
</div>
<div class="a" style="left:496px;top:126px;width:1px;height:16px;background:#fff"></div>
<div class="a" style="left:539px;top:126px;width:1px;height:16px;background:#8E8C88"></div>
<div class="clip" style="left:496px;top:126px;width:43px;height:16px">
<div class="t" style="left:1.5px;top:2.20px">Horizon</div>
</div>
<div class="a" style="left:541px;top:126px;width:1px;height:16px;background:#fff"></div>
<div class="a" style="left:584px;top:126px;width:1px;height:16px;background:#8E8C88"></div>
<div class="clip" style="left:541px;top:126px;width:43px;height:16px">
<div class="t" style="left:1.5px;top:2.20px">Trusted</div>
</div>
<div class="a" style="left:586px;top:126px;width:1px;height:16px;background:#fff"></div>
<div class="a" style="left:644px;top:126px;width:1px;height:16px;background:#8E8C88"></div>
<div class="clip" style="left:586px;top:126px;width:58px;height:16px">
<div class="t" style="left:1.5px;top:2.20px">Priority (...</div>
</div>
<div class="a" style="left:646px;top:126px;width:1px;height:16px;background:#fff"></div>
<div class="a" style="left:681px;top:126px;width:1px;height:16px;background:#8E8C88"></div>
<div class="clip" style="left:646px;top:126px;width:35px;height:16px">
<div class="t" style="left:1.5px;top:2.20px">Path Co</div>
</div>
<svg class="a" style="left:685.5px;top:132px" width="9" height="6" viewBox="0 0 9 6"><path d="M0 0h9L4.5 5z" fill="#000"/></svg>
<div class="t" style="right:1189.5px;top:143.70px;">41</div>
<div class="t" style="left:183px;top:143.70px;">IH</div>
<svg class="a" style="left:211px;top:146px" width="15" height="9" viewBox="0 0 15 9" shape-rendering="crispEdges"><rect x="3" y="0" width="1" height="1" fill="#000"/><rect x="11" y="0" width="1" height="1" fill="#000"/><rect x="3" y="1" width="1" height="1" fill="#000"/><rect x="11" y="1" width="1" height="1" fill="#000"/><rect x="2" y="2" width="4" height="1" fill="#000"/><rect x="9" y="2" width="4" height="1" fill="#000"/><rect x="2" y="3" width="2" height="1" fill="#000"/><rect x="6" y="3" width="3" height="1" fill="#000"/><rect x="11" y="3" width="2" height="1" fill="#000"/><rect x="1" y="4" width="1" height="1" fill="#000"/><rect x="3" y="4" width="1" height="1" fill="#000"/><rect x="11" y="4" width="1" height="1" fill="#000"/><rect x="13" y="4" width="1" height="1" fill="#000"/><rect x="0" y="5" width="1" height="1" fill="#000"/><rect x="3" y="5" width="1" height="1" fill="#000"/><rect x="11" y="5" width="1" height="1" fill="#000"/><rect x="14" y="5" width="1" height="1" fill="#000"/><rect x="3" y="6" width="1" height="1" fill="#000"/><rect x="11" y="6" width="1" height="1" fill="#000"/><rect x="2" y="7" width="11" height="1" fill="#8E1A08"/><rect x="1" y="8" width="4" height="1" fill="#8E1A08"/><rect x="10" y="8" width="4" height="1" fill="#8E1A08"/></svg>
<div class="t" style="left:229px;top:143.70px;color:#808080;font-style:italic">ether46</div>
<div class="t" style="left:397px;top:143.70px;">bridge</div>
<div class="t" style="left:543px;top:143.70px;">no</div>
<div class="t" style="right:725.5px;top:143.70px;">80</div>
<div class="t" style="right:1189.5px;top:159.70px;">42</div>
<div class="t" style="left:183px;top:159.70px;">IH</div>
<svg class="a" style="left:211px;top:162px" width="15" height="9" viewBox="0 0 15 9" shape-rendering="crispEdges"><rect x="3" y="0" width="1" height="1" fill="#000"/><rect x="11" y="0" width="1" height="1" fill="#000"/><rect x="3" y="1" width="1" height="1" fill="#000"/><rect x="11" y="1" width="1" height="1" fill="#000"/><rect x="2" y="2" width="4" height="1" fill="#000"/><rect x="9" y="2" width="4" height="1" fill="#000"/><rect x="2" y="3" width="2" height="1" fill="#000"/><rect x="6" y="3" width="3" height="1" fill="#000"/><rect x="11" y="3" width="2" height="1" fill="#000"/><rect x="1" y="4" width="1" height="1" fill="#000"/><rect x="3" y="4" width="1" height="1" fill="#000"/><rect x="11" y="4" width="1" height="1" fill="#000"/><rect x="13" y="4" width="1" height="1" fill="#000"/><rect x="0" y="5" width="1" height="1" fill="#000"/><rect x="3" y="5" width="1" height="1" fill="#000"/><rect x="11" y="5" width="1" height="1" fill="#000"/><rect x="14" y="5" width="1" height="1" fill="#000"/><rect x="3" y="6" width="1" height="1" fill="#000"/><rect x="11" y="6" width="1" height="1" fill="#000"/><rect x="2" y="7" width="11" height="1" fill="#8E1A08"/><rect x="1" y="8" width="4" height="1" fill="#8E1A08"/><rect x="10" y="8" width="4" height="1" fill="#8E1A08"/></svg>
<div class="t" style="left:229px;top:159.70px;color:#808080;font-style:italic">ether47</div>
<div class="t" style="left:397px;top:159.70px;">bridge</div>
<div class="t" style="left:543px;top:159.70px;">no</div>
<div class="t" style="right:725.5px;top:159.70px;">80</div>
<div class="t" style="right:1189.5px;top:175.70px;">43</div>
<div class="t" style="left:183px;top:175.70px;">H</div>
<svg class="a" style="left:211px;top:178px" width="15" height="9" viewBox="0 0 15 9" shape-rendering="crispEdges"><rect x="3" y="0" width="1" height="1" fill="#000"/><rect x="11" y="0" width="1" height="1" fill="#000"/><rect x="3" y="1" width="1" height="1" fill="#000"/><rect x="11" y="1" width="1" height="1" fill="#000"/><rect x="2" y="2" width="4" height="1" fill="#000"/><rect x="9" y="2" width="4" height="1" fill="#000"/><rect x="2" y="3" width="2" height="1" fill="#000"/><rect x="6" y="3" width="3" height="1" fill="#000"/><rect x="11" y="3" width="2" height="1" fill="#000"/><rect x="1" y="4" width="1" height="1" fill="#000"/><rect x="3" y="4" width="1" height="1" fill="#000"/><rect x="11" y="4" width="1" height="1" fill="#000"/><rect x="13" y="4" width="1" height="1" fill="#000"/><rect x="0" y="5" width="1" height="1" fill="#000"/><rect x="3" y="5" width="1" height="1" fill="#000"/><rect x="11" y="5" width="1" height="1" fill="#000"/><rect x="14" y="5" width="1" height="1" fill="#000"/><rect x="3" y="6" width="1" height="1" fill="#000"/><rect x="11" y="6" width="1" height="1" fill="#000"/><rect x="2" y="7" width="11" height="1" fill="#8E1A08"/><rect x="1" y="8" width="4" height="1" fill="#8E1A08"/><rect x="10" y="8" width="4" height="1" fill="#8E1A08"/></svg>
<div class="t" style="left:228px;top:175.70px;">ether48</div>
<div class="t" style="left:397px;top:175.70px;">bridge</div>
<div class="t" style="left:543px;top:175.70px;">no</div>
<div class="t" style="right:725.5px;top:175.70px;">80</div>
<div class="t" style="right:1189.5px;top:191.70px;">44</div>
<div class="t" style="left:183px;top:191.70px;">IH</div>
<svg class="a" style="left:211px;top:194px" width="15" height="9" viewBox="0 0 15 9" shape-rendering="crispEdges"><rect x="3" y="0" width="1" height="1" fill="#000"/><rect x="11" y="0" width="1" height="1" fill="#000"/><rect x="3" y="1" width="1" height="1" fill="#000"/><rect x="11" y="1" width="1" height="1" fill="#000"/><rect x="2" y="2" width="4" height="1" fill="#000"/><rect x="9" y="2" width="4" height="1" fill="#000"/><rect x="2" y="3" width="2" height="1" fill="#000"/><rect x="6" y="3" width="3" height="1" fill="#000"/><rect x="11" y="3" width="2" height="1" fill="#000"/><rect x="1" y="4" width="1" height="1" fill="#000"/><rect x="3" y="4" width="1" height="1" fill="#000"/><rect x="11" y="4" width="1" height="1" fill="#000"/><rect x="13" y="4" width="1" height="1" fill="#000"/><rect x="0" y="5" width="1" height="1" fill="#000"/><rect x="3" y="5" width="1" height="1" fill="#000"/><rect x="11" y="5" width="1" height="1" fill="#000"/><rect x="14" y="5" width="1" height="1" fill="#000"/><rect x="3" y="6" width="1" height="1" fill="#000"/><rect x="11" y="6" width="1" height="1" fill="#000"/><rect x="2" y="7" width="11" height="1" fill="#8E1A08"/><rect x="1" y="8" width="4" height="1" fill="#8E1A08"/><rect x="10" y="8" width="4" height="1" fill="#8E1A08"/></svg>
<div class="t" style="left:229px;top:191.70px;color:#808080;font-style:italic">ether49</div>
<div class="t" style="left:397px;top:191.70px;">bridge</div>
<div class="t" style="left:543px;top:191.70px;">no</div>
<div class="t" style="right:725.5px;top:191.70px;">80</div>
<div class="t" style="right:1189.5px;top:207.70px;">45</div>
<div class="t" style="left:183px;top:207.70px;">IH</div>
<svg class="a" style="left:211px;top:210px" width="15" height="9" viewBox="0 0 15 9" shape-rendering="crispEdges"><rect x="3" y="0" width="1" height="1" fill="#000"/><rect x="11" y="0" width="1" height="1" fill="#000"/><rect x="3" y="1" width="1" height="1" fill="#000"/><rect x="11" y="1" width="1" height="1" fill="#000"/><rect x="2" y="2" width="4" height="1" fill="#000"/><rect x="9" y="2" width="4" height="1" fill="#000"/><rect x="2" y="3" width="2" height="1" fill="#000"/><rect x="6" y="3" width="3" height="1" fill="#000"/><rect x="11" y="3" width="2" height="1" fill="#000"/><rect x="1" y="4" width="1" height="1" fill="#000"/><rect x="3" y="4" width="1" height="1" fill="#000"/><rect x="11" y="4" width="1" height="1" fill="#000"/><rect x="13" y="4" width="1" height="1" fill="#000"/><rect x="0" y="5" width="1" height="1" fill="#000"/><rect x="3" y="5" width="1" height="1" fill="#000"/><rect x="11" y="5" width="1" height="1" fill="#000"/><rect x="14" y="5" width="1" height="1" fill="#000"/><rect x="3" y="6" width="1" height="1" fill="#000"/><rect x="11" y="6" width="1" height="1" fill="#000"/><rect x="2" y="7" width="11" height="1" fill="#8E1A08"/><rect x="1" y="8" width="4" height="1" fill="#8E1A08"/><rect x="10" y="8" width="4" height="1" fill="#8E1A08"/></svg>
<div class="t" style="left:229px;top:207.70px;color:#808080;font-style:italic">sfp-sfpplus1</div>
<div class="t" style="left:397px;top:207.70px;">bridge</div>
<div class="t" style="left:543px;top:207.70px;">no</div>
<div class="t" style="right:725.5px;top:207.70px;">80</div>
<div class="t" style="right:1189.5px;top:223.70px;">46</div>
<div class="t" style="left:183px;top:223.70px;">IH</div>
<svg class="a" style="left:211px;top:226px" width="15" height="9" viewBox="0 0 15 9" shape-rendering="crispEdges"><rect x="3" y="0" width="1" height="1" fill="#000"/><rect x="11" y="0" width="1" height="1" fill="#000"/><rect x="3" y="1" width="1" height="1" fill="#000"/><rect x="11" y="1" width="1" height="1" fill="#000"/><rect x="2" y="2" width="4" height="1" fill="#000"/><rect x="9" y="2" width="4" height="1" fill="#000"/><rect x="2" y="3" width="2" height="1" fill="#000"/><rect x="6" y="3" width="3" height="1" fill="#000"/><rect x="11" y="3" width="2" height="1" fill="#000"/><rect x="1" y="4" width="1" height="1" fill="#000"/><rect x="3" y="4" width="1" height="1" fill="#000"/><rect x="11" y="4" width="1" height="1" fill="#000"/><rect x="13" y="4" width="1" height="1" fill="#000"/><rect x="0" y="5" width="1" height="1" fill="#000"/><rect x="3" y="5" width="1" height="1" fill="#000"/><rect x="11" y="5" width="1" height="1" fill="#000"/><rect x="14" y="5" width="1" height="1" fill="#000"/><rect x="3" y="6" width="1" height="1" fill="#000"/><rect x="11" y="6" width="1" height="1" fill="#000"/><rect x="2" y="7" width="11" height="1" fill="#8E1A08"/><rect x="1" y="8" width="4" height="1" fill="#8E1A08"/><rect x="10" y="8" width="4" height="1" fill="#8E1A08"/></svg>
<div class="t" style="left:229px;top:223.70px;color:#808080;font-style:italic">sfp-sfpplus2</div>
<div class="t" style="left:397px;top:223.70px;">bridge</div>
<div class="t" style="left:543px;top:223.70px;">no</div>
<div class="t" style="right:725.5px;top:223.70px;">80</div>
<div class="t" style="right:1189.5px;top:239.70px;">47</div>
<div class="t" style="left:183px;top:239.70px;">IH</div>
<svg class="a" style="left:211px;top:242px" width="15" height="9" viewBox="0 0 15 9" shape-rendering="crispEdges"><rect x="3" y="0" width="1" height="1" fill="#000"/><rect x="11" y="0" width="1" height="1" fill="#000"/><rect x="3" y="1" width="1" height="1" fill="#000"/><rect x="11" y="1" width="1" height="1" fill="#000"/><rect x="2" y="2" width="4" height="1" fill="#000"/><rect x="9" y="2" width="4" height="1" fill="#000"/><rect x="2" y="3" width="2" height="1" fill="#000"/><rect x="6" y="3" width="3" height="1" fill="#000"/><rect x="11" y="3" width="2" height="1" fill="#000"/><rect x="1" y="4" width="1" height="1" fill="#000"/><rect x="3" y="4" width="1" height="1" fill="#000"/><rect x="11" y="4" width="1" height="1" fill="#000"/><rect x="13" y="4" width="1" height="1" fill="#000"/><rect x="0" y="5" width="1" height="1" fill="#000"/><rect x="3" y="5" width="1" height="1" fill="#000"/><rect x="11" y="5" width="1" height="1" fill="#000"/><rect x="14" y="5" width="1" height="1" fill="#000"/><rect x="3" y="6" width="1" height="1" fill="#000"/><rect x="11" y="6" width="1" height="1" fill="#000"/><rect x="2" y="7" width="11" height="1" fill="#8E1A08"/><rect x="1" y="8" width="4" height="1" fill="#8E1A08"/><rect x="10" y="8" width="4" height="1" fill="#8E1A08"/></svg>
<div class="t" style="left:229px;top:239.70px;color:#808080;font-style:italic">sfp-sfpplus3</div>
<div class="t" style="left:397px;top:239.70px;">bridge</div>
<div class="t" style="left:543px;top:239.70px;">no</div>
<div class="t" style="right:725.5px;top:239.70px;">80</div>
<div class="t" style="right:1189.5px;top:255.70px;">48</div>
<div class="t" style="left:183px;top:255.70px;">IH</div>
<svg class="a" style="left:211px;top:258px" width="15" height="9" viewBox="0 0 15 9" shape-rendering="crispEdges"><rect x="3" y="0" width="1" height="1" fill="#000"/><rect x="11" y="0" width="1" height="1" fill="#000"/><rect x="3" y="1" width="1" height="1" fill="#000"/><rect x="11" y="1" width="1" height="1" fill="#000"/><rect x="2" y="2" width="4" height="1" fill="#000"/><rect x="9" y="2" width="4" height="1" fill="#000"/><rect x="2" y="3" width="2" height="1" fill="#000"/><rect x="6" y="3" width="3" height="1" fill="#000"/><rect x="11" y="3" width="2" height="1" fill="#000"/><rect x="1" y="4" width="1" height="1" fill="#000"/><rect x="3" y="4" width="1" height="1" fill="#000"/><rect x="11" y="4" width="1" height="1" fill="#000"/><rect x="13" y="4" width="1" height="1" fill="#000"/><rect x="0" y="5" width="1" height="1" fill="#000"/><rect x="3" y="5" width="1" height="1" fill="#000"/><rect x="11" y="5" width="1" height="1" fill="#000"/><rect x="14" y="5" width="1" height="1" fill="#000"/><rect x="3" y="6" width="1" height="1" fill="#000"/><rect x="11" y="6" width="1" height="1" fill="#000"/><rect x="2" y="7" width="11" height="1" fill="#8E1A08"/><rect x="1" y="8" width="4" height="1" fill="#8E1A08"/><rect x="10" y="8" width="4" height="1" fill="#8E1A08"/></svg>
<div class="t" style="left:229px;top:255.70px;color:#808080;font-style:italic">sfp-sfpplus4</div>
<div class="t" style="left:397px;top:255.70px;">bridge</div>
<div class="t" style="left:543px;top:255.70px;">no</div>
<div class="t" style="right:725.5px;top:255.70px;">80</div>
<div class="t" style="right:1189.5px;top:271.70px;">49</div>
<div class="t" style="left:183px;top:271.70px;">H</div>
<svg class="a" style="left:211px;top:274px" width="15" height="9" viewBox="0 0 15 9" shape-rendering="crispEdges"><rect x="3" y="0" width="1" height="1" fill="#000"/><rect x="11" y="0" width="1" height="1" fill="#000"/><rect x="3" y="1" width="1" height="1" fill="#000"/><rect x="11" y="1" width="1" height="1" fill="#000"/><rect x="2" y="2" width="4" height="1" fill="#000"/><rect x="9" y="2" width="4" height="1" fill="#000"/><rect x="2" y="3" width="2" height="1" fill="#000"/><rect x="6" y="3" width="3" height="1" fill="#000"/><rect x="11" y="3" width="2" height="1" fill="#000"/><rect x="1" y="4" width="1" height="1" fill="#000"/><rect x="3" y="4" width="1" height="1" fill="#000"/><rect x="11" y="4" width="1" height="1" fill="#000"/><rect x="13" y="4" width="1" height="1" fill="#000"/><rect x="0" y="5" width="1" height="1" fill="#000"/><rect x="3" y="5" width="1" height="1" fill="#000"/><rect x="11" y="5" width="1" height="1" fill="#000"/><rect x="14" y="5" width="1" height="1" fill="#000"/><rect x="3" y="6" width="1" height="1" fill="#000"/><rect x="11" y="6" width="1" height="1" fill="#000"/><rect x="2" y="7" width="11" height="1" fill="#8E1A08"/><rect x="1" y="8" width="4" height="1" fill="#8E1A08"/><rect x="10" y="8" width="4" height="1" fill="#8E1A08"/></svg>
<div class="t" style="left:228px;top:271.70px;">bonding-switch-trunk</div>
<div class="t" style="left:397px;top:271.70px;">bridge</div>
<div class="t" style="left:543px;top:271.70px;">no</div>
<div class="t" style="right:725.5px;top:271.70px;">80</div>
<div class="t" style="right:1189.5px;top:287.70px;">50</div>
<div class="t" style="left:183px;top:287.70px;">H</div>
<svg class="a" style="left:211px;top:290px" width="15" height="9" viewBox="0 0 15 9" shape-rendering="crispEdges"><rect x="3" y="0" width="1" height="1" fill="#000"/><rect x="11" y="0" width="1" height="1" fill="#000"/><rect x="3" y="1" width="1" height="1" fill="#000"/><rect x="11" y="1" width="1" height="1" fill="#000"/><rect x="2" y="2" width="4" height="1" fill="#000"/><rect x="9" y="2" width="4" height="1" fill="#000"/><rect x="2" y="3" width="2" height="1" fill="#000"/><rect x="6" y="3" width="3" height="1" fill="#000"/><rect x="11" y="3" width="2" height="1" fill="#000"/><rect x="1" y="4" width="1" height="1" fill="#000"/><rect x="3" y="4" width="1" height="1" fill="#000"/><rect x="11" y="4" width="1" height="1" fill="#000"/><rect x="13" y="4" width="1" height="1" fill="#000"/><rect x="0" y="5" width="1" height="1" fill="#000"/><rect x="3" y="5" width="1" height="1" fill="#000"/><rect x="11" y="5" width="1" height="1" fill="#000"/><rect x="14" y="5" width="1" height="1" fill="#000"/><rect x="3" y="6" width="1" height="1" fill="#000"/><rect x="11" y="6" width="1" height="1" fill="#000"/><rect x="2" y="7" width="11" height="1" fill="#8E1A08"/><rect x="1" y="8" width="4" height="1" fill="#8E1A08"/><rect x="10" y="8" width="4" height="1" fill="#8E1A08"/></svg>
<div class="t" style="left:228px;top:287.70px;">bonding-host1</div>
<div class="t" style="left:397px;top:287.70px;">bridge</div>
<div class="t" style="left:543px;top:287.70px;">no</div>
<div class="t" style="right:725.5px;top:287.70px;">60</div>
<div class="t" style="right:1189.5px;top:303.70px;">51</div>
<div class="t" style="left:183px;top:303.70px;">H</div>
<svg class="a" style="left:211px;top:306px" width="15" height="9" viewBox="0 0 15 9" shape-rendering="crispEdges"><rect x="3" y="0" width="1" height="1" fill="#000"/><rect x="11" y="0" width="1" height="1" fill="#000"/><rect x="3" y="1" width="1" height="1" fill="#000"/><rect x="11" y="1" width="1" height="1" fill="#000"/><rect x="2" y="2" width="4" height="1" fill="#000"/><rect x="9" y="2" width="4" height="1" fill="#000"/><rect x="2" y="3" width="2" height="1" fill="#000"/><rect x="6" y="3" width="3" height="1" fill="#000"/><rect x="11" y="3" width="2" height="1" fill="#000"/><rect x="1" y="4" width="1" height="1" fill="#000"/><rect x="3" y="4" width="1" height="1" fill="#000"/><rect x="11" y="4" width="1" height="1" fill="#000"/><rect x="13" y="4" width="1" height="1" fill="#000"/><rect x="0" y="5" width="1" height="1" fill="#000"/><rect x="3" y="5" width="1" height="1" fill="#000"/><rect x="11" y="5" width="1" height="1" fill="#000"/><rect x="14" y="5" width="1" height="1" fill="#000"/><rect x="3" y="6" width="1" height="1" fill="#000"/><rect x="11" y="6" width="1" height="1" fill="#000"/><rect x="2" y="7" width="11" height="1" fill="#8E1A08"/><rect x="1" y="8" width="4" height="1" fill="#8E1A08"/><rect x="10" y="8" width="4" height="1" fill="#8E1A08"/></svg>
<div class="t" style="left:228px;top:303.70px;">bonding-host2</div>
<div class="t" style="left:397px;top:303.70px;">bridge</div>
<div class="t" style="left:543px;top:303.70px;">no</div>
<div class="t" style="right:725.5px;top:303.70px;">80</div>
<div class="a" style="left:682px;top:143px;width:15px;height:188px;background:#C9C6C0"></div>
<div class="a" style="left:682px;top:143px;width:13px;height:13px;border:1px solid #A6A39D;background:#DEDBD5;box-shadow:inset 1px 1px 0 #fff"></div>
<svg class="a" style="left:685.5px;top:147px" width="9" height="7" viewBox="0 0 9 7"><path d="M0.5 5.5L4.5 1.5 8.5 5.5z" fill="#000"/><rect x="3" y="5" width="3" height="2" fill="#000"/></svg>
<div class="a" style="left:682px;top:283px;width:13px;height:30px;border:1px solid #A6A39D;background:#DEDBD5;box-shadow:inset 1px 1px 0 #fff"></div>
<div class="a" style="left:682px;top:316px;width:13px;height:13px;border:1px solid #A6A39D;background:#DEDBD5;box-shadow:inset 1px 1px 0 #fff"></div>
<svg class="a" style="left:685.5px;top:320px" width="9" height="7" viewBox="0 0 9 7"><path d="M0.5 1.5L4.5 5.5 8.5 1.5z" fill="#000"/><rect x="3" y="0" width="3" height="2" fill="#000"/></svg>
<div class="a" style="left:682px;top:143px;width:1px;height:188px;background:#A6A39D"></div>
<div class="a" style="left:697px;top:125px;width:1px;height:221px;background:#8E8C88"></div>
<div class="a" style="left:157px;top:331px;width:525px;height:15px;background:#C9C6C0;border-top:1px solid #A6A39D;box-sizing:border-box"></div>
<div class="a" style="left:157px;top:331px;width:13px;height:13px;border:1px solid #A6A39D;background:#DEDBD5;box-shadow:inset 1px 1px 0 #fff"></div>
<svg class="a" style="left:161px;top:334px" width="7" height="9" viewBox="0 0 7 9"><path d="M5.5 0.5L1.5 4.5 5.5 8.5z" fill="#000"/><rect x="5" y="3" width="2" height="3" fill="#000"/></svg>
<div class="a" style="left:172px;top:331px;width:299px;height:13px;border:1px solid #A6A39D;background:#DEDBD5;box-shadow:inset 1px 1px 0 #fff"></div>
<div class="a" style="left:668px;top:331px;width:12px;height:13px;border:1px solid #A6A39D;background:#DEDBD5;box-shadow:inset 1px 1px 0 #fff"></div>
<svg class="a" style="left:672px;top:334px" width="7" height="9" viewBox="0 0 7 9"><path d="M1.5 0.5L5.5 4.5 1.5 8.5z" fill="#000"/><rect x="0" y="3" width="2" height="3" fill="#000"/></svg>
<div class="a" style="left:682px;top:331px;width:16px;height:15px;background:#DEDBD5"></div>
<div class="a" style="left:157px;top:347px;width:540px;height:17px;border-top:1px solid #8E8C88;border-left:1px solid #8E8C88;box-shadow:1px 1px 0 #fff;"></div>
<div class="t" style="left:159.5px;top:348.70px;">52 items (1 selected)</div>
</div>
<div class="a" style="left:0;top:0;width:1368px;height:966px;z-index:5">
<div class="a" style="left:716px;top:68px;width:412px;height:453px;border:1px solid #000;background:#DEDBD5"></div>
<div class="a" style="left:717px;top:69px;width:410px;height:451px;border-top:1px solid #E2DFDA;border-left:1px solid #F2F0EC;border-right:1px solid #9A9894;border-bottom:1px solid #9A9894"></div>
<div class="a" style="left:717px;top:69px;width:411px;height:22px;background:#B9B6B0;border-top:1px solid #E2DFDA;border-left:1px solid #E2DFDA;box-sizing:border-box"></div>
<div class="t" style="left:721.8px;top:75.70px;color:#fff">Interface &lt;bonding-host1&gt;</div>
<div class="a" style="left:1093px;top:73px;width:13px;height:13px;border:1px solid #555;background:#DEDBD5;box-shadow:inset 1px 1px 0 #fff"></div>
<div class="a" style="left:1096px;top:76px;width:7px;height:6px;border:1px solid #444;border-top-width:2px"></div>
<div class="a" style="left:1110px;top:73px;width:13px;height:13px;border:1px solid #555;background:#DEDBD5;box-shadow:inset 1px 1px 0 #fff"></div>
<svg class="a" style="left:1114px;top:77px" width="7" height="7" viewBox="0 0 7 7" shape-rendering="crispEdges"><rect x="0" y="0" width="2" height="1" fill="#444"/><rect x="5" y="0" width="2" height="1" fill="#444"/><rect x="0" y="1" width="3" height="1" fill="#444"/><rect x="4" y="1" width="3" height="1" fill="#444"/><rect x="1" y="2" width="5" height="1" fill="#444"/><rect x="2" y="3" width="3" height="1" fill="#444"/><rect x="1" y="4" width="5" height="1" fill="#444"/><rect x="0" y="5" width="3" height="1" fill="#444"/><rect x="4" y="5" width="3" height="1" fill="#444"/><rect x="0" y="6" width="2" height="1" fill="#444"/><rect x="5" y="6" width="2" height="1" fill="#444"/></svg>
<div class="a" style="left:723px;top:96px;width:48px;height:22px;background:#CBC8C2;border-top:1px solid #E6E3DE;border-left:1px solid #E6E3DE;border-right:1px solid #B4B1AB;box-sizing:border-box;width:49px"></div>
<div class="t" style="left:547.5px;width:400px;text-align:center;top:100.70px;">General</div>
<div class="a" style="left:825px;top:96px;width:44px;height:22px;background:#CBC8C2;border-top:1px solid #E6E3DE;border-left:1px solid #E6E3DE;border-right:1px solid #B4B1AB;box-sizing:border-box;width:45px"></div>
<div class="t" style="left:647.5px;width:400px;text-align:center;top:100.70px;">Status</div>
<div class="a" style="left:870px;top:96px;width:44px;height:22px;background:#CBC8C2;border-top:1px solid #E6E3DE;border-left:1px solid #E6E3DE;border-right:1px solid #B4B1AB;box-sizing:border-box;width:45px"></div>
<div class="t" style="left:692.5px;width:400px;text-align:center;top:100.70px;">Traffic</div>
<div class="a" style="left:772px;top:93px;width:53px;height:26px;background:#DEDBD5;border-top:1px solid #fff;border-left:1px solid #fff;border-right:1px solid #A9A6A0;box-sizing:border-box;z-index:1"></div>
<div class="t" style="left:598.5px;width:400px;text-align:center;top:99.20px;z-index:1">Bonding</div>
<div class="a" style="left:719px;top:118px;width:309px;height:342px;border-top:1px solid #fff;border-left:1px solid #fff;border-right:1px solid #A09D97;border-bottom:1px solid #A09D97;box-sizing:border-box"></div>
<div class="t" style="right:540.5px;top:128.70px;">Slaves:</div>
<div class="a inp" style="left:833px;top:126px;width:149px;height:15px;background:#fff"></div>
<div class="t" style="left:836px;top:128.70px;">ether1</div>
<div class="a btn" style="left:985px;top:126px;width:15px;height:15px;border-color:#8E8C88"></div>
<svg class="a" style="left:989px;top:131px" width="9" height="9" viewBox="0 0 9 9"><rect x="1" y="0" width="7" height="1" fill="#000"/><rect x="3" y="2" width="3" height="2.5" fill="#000"/><path d="M0.5 4h8L4.5 8z" fill="#000"/></svg>
<svg class="a" style="left:1008px;top:128px" width="9" height="14" viewBox="0 0 9 14"><path d="M0 6h9L4.5 1z" fill="#9A9E96"/><path d="M0 8h9L4.5 13z" fill="#000"/></svg>
<div class="a inp" style="left:833px;top:149px;width:149px;height:15px;background:#fff"></div>
<div class="t" style="left:836px;top:151.70px;">ether2</div>
<div class="a btn" style="left:985px;top:149px;width:15px;height:15px;border-color:#8E8C88"></div>
<svg class="a" style="left:989px;top:154px" width="9" height="9" viewBox="0 0 9 9"><rect x="1" y="0" width="7" height="1" fill="#000"/><rect x="3" y="2" width="3" height="2.5" fill="#000"/><path d="M0.5 4h8L4.5 8z" fill="#000"/></svg>
<svg class="a" style="left:1008px;top:151px" width="9" height="14" viewBox="0 0 9 14"><path d="M0 6h9L4.5 1z" fill="#9A9E96"/><path d="M0 8h9L4.5 13z" fill="#000"/></svg>
<div class="t" style="right:540.5px;top:174.70px;">Mode:</div>
<div class="a inp" style="left:833px;top:172px;width:167px;height:15px;background:#fff"></div>
<div class="t" style="left:836px;top:174.70px;">802.3ad</div>
<div class="a btn" style="left:1003px;top:172px;width:15px;height:15px;border-color:#8E8C88"></div>
<svg class="a" style="left:1007px;top:177px" width="9" height="9" viewBox="0 0 9 9"><rect x="1" y="0" width="7" height="1" fill="#000"/><rect x="3" y="2" width="3" height="2.5" fill="#000"/><path d="M0.5 4h8L4.5 8z" fill="#000"/></svg>
<div class="t" style="right:540.5px;top:197.70px;color:#A09E9A">Primary:</div>
<div class="a inp" style="left:833px;top:195px;width:167px;height:15px;background:#DEDBD5"></div>
<div class="t" style="left:836px;top:197.70px;">none</div>
<div class="a btn" style="left:1003px;top:195px;width:15px;height:15px;border-color:#8E8C88"></div>
<svg class="a" style="left:1007px;top:200px" width="9" height="9" viewBox="0 0 9 9"><rect x="1" y="0" width="7" height="1" fill="#000"/><rect x="3" y="2" width="3" height="2.5" fill="#000"/><path d="M0.5 4h8L4.5 8z" fill="#000"/></svg>
<div class="t" style="right:540.5px;top:220.70px;">Link Monitoring:</div>
<div class="a inp" style="left:833px;top:218px;width:167px;height:15px;background:#fff"></div>
<div class="t" style="left:836px;top:220.70px;">mii</div>
<div class="a btn" style="left:1003px;top:218px;width:15px;height:15px;border-color:#8E8C88"></div>
<svg class="a" style="left:1007px;top:223px" width="9" height="9" viewBox="0 0 9 9"><rect x="1" y="0" width="7" height="1" fill="#000"/><rect x="3" y="2" width="3" height="2.5" fill="#000"/><path d="M0.5 4h8L4.5 8z" fill="#000"/></svg>
<div class="t" style="right:540.5px;top:243.70px;">Transmit Hash Policy:</div>
<div class="a inp" style="left:833px;top:241px;width:167px;height:15px;background:#fff"></div>
<div class="t" style="left:836px;top:243.70px;">layer 2</div>
<div class="a btn" style="left:1003px;top:241px;width:15px;height:15px;border-color:#8E8C88"></div>
<svg class="a" style="left:1007px;top:246px" width="9" height="9" viewBox="0 0 9 9"><rect x="1" y="0" width="7" height="1" fill="#000"/><rect x="3" y="2" width="3" height="2.5" fill="#000"/><path d="M0.5 4h8L4.5 8z" fill="#000"/></svg>
<div class="t" style="right:540.5px;top:266.70px;">Min. Links:</div>
<div class="a inp" style="left:833px;top:264px;width:186px;height:15px;background:#fff"></div>
<div class="t" style="left:836px;top:266.70px;">0</div>
<div class="a" style="left:727px;top:287px;width:293px;height:1px;background:#B5B2AC"></div>
<div class="a" style="left:727px;top:288px;width:293px;height:1px;background:#fff"></div>
<div class="t" style="right:540.5px;top:297.70px;">Down Delay:</div>
<div class="a inp" style="left:833px;top:295px;width:167px;height:15px;background:#fff"></div>
<div class="t" style="left:836px;top:297.70px;">200</div>
<div class="t" style="left:1004px;top:297.70px;">ms</div>
<div class="t" style="right:540.5px;top:320.70px;">Up Delay:</div>
<div class="a inp" style="left:833px;top:318px;width:167px;height:15px;background:#fff"></div>
<div class="t" style="left:836px;top:320.70px;">200</div>
<div class="t" style="left:1004px;top:320.70px;">ms</div>
<div class="t" style="right:540.5px;top:343.70px;">LACP Rate:</div>
<div class="a inp" style="left:833px;top:341px;width:167px;height:15px;background:#fff"></div>
<div class="t" style="left:836px;top:343.70px;">1 s</div>
<div class="a btn" style="left:1003px;top:341px;width:15px;height:15px;border-color:#8E8C88"></div>
<svg class="a" style="left:1007px;top:346px" width="9" height="9" viewBox="0 0 9 9"><rect x="1" y="0" width="7" height="1" fill="#000"/><rect x="3" y="2" width="3" height="2.5" fill="#000"/><path d="M0.5 4h8L4.5 8z" fill="#000"/></svg>
<div class="a" style="left:727px;top:364px;width:293px;height:1px;background:#B5B2AC"></div>
<div class="a" style="left:727px;top:365px;width:293px;height:1px;background:#fff"></div>
<div class="t" style="right:540.5px;top:374.70px;">MII Interval:</div>
<div class="a inp" style="left:833px;top:372px;width:167px;height:15px;background:#fff"></div>
<div class="t" style="left:836px;top:374.70px;">100</div>
<div class="t" style="left:1004px;top:374.70px;">ms</div>
<div class="a btn" style="left:1038px;top:97px;width:80px;height:21px;border-color:#000;box-shadow:inset 1px 1px 0 #fff,1px 1px 0 #fff;"></div>
<div class="t" style="left:879.0px;width:400px;text-align:center;top:102.70px;">OK</div>
<div class="a btn" style="left:1038px;top:123px;width:80px;height:21px;"></div>
<div class="t" style="left:879.0px;width:400px;text-align:center;top:128.70px;">Cancel</div>
<div class="a btn" style="left:1038px;top:149px;width:80px;height:21px;"></div>
<div class="t" style="left:879.0px;width:400px;text-align:center;top:154.70px;">Apply</div>
<div class="a btn" style="left:1038px;top:180px;width:80px;height:21px;"></div>
<div class="t" style="left:879.0px;width:400px;text-align:center;top:185.70px;">Disable</div>
<div class="a btn" style="left:1038px;top:206px;width:80px;height:21px;"></div>
<div class="t" style="left:879.0px;width:400px;text-align:center;top:211.70px;">Comment</div>
<div class="a btn" style="left:1038px;top:232px;width:80px;height:21px;"></div>
<div class="t" style="left:879.0px;width:400px;text-align:center;top:237.70px;">Copy</div>
<div class="a btn" style="left:1038px;top:258px;width:80px;height:21px;"></div>
<div class="t" style="left:879.0px;width:400px;text-align:center;top:263.70px;">Remove</div>
<div class="a btn" style="left:1038px;top:284px;width:80px;height:21px;"></div>
<div class="t" style="left:879.0px;width:400px;text-align:center;top:289.70px;">Torch</div>
</div>
<div class="a" style="left:0;top:0;width:1368px;height:966px;z-index:6">
<div class="a" style="left:152px;top:539px;width:412px;height:438px;border:1px solid #000;background:#DEDBD5"></div>
<div class="a" style="left:153px;top:540px;width:410px;height:436px;border-top:1px solid #E2DFDA;border-left:1px solid #F2F0EC;border-right:1px solid #9A9894;border-bottom:1px solid #9A9894"></div>
<div class="a" style="left:153px;top:540px;width:411px;height:22px;background:#B9B6B0;border-top:1px solid #E2DFDA;border-left:1px solid #E2DFDA;box-sizing:border-box"></div>
<div class="t" style="left:157.8px;top:546.70px;color:#fff">Interface &lt;bridge&gt;</div>
<div class="a" style="left:529px;top:544px;width:13px;height:13px;border:1px solid #555;background:#DEDBD5;box-shadow:inset 1px 1px 0 #fff"></div>
<div class="a" style="left:532px;top:547px;width:7px;height:6px;border:1px solid #444;border-top-width:2px"></div>
<div class="a" style="left:546px;top:544px;width:13px;height:13px;border:1px solid #555;background:#DEDBD5;box-shadow:inset 1px 1px 0 #fff"></div>
<svg class="a" style="left:550px;top:548px" width="7" height="7" viewBox="0 0 7 7" shape-rendering="crispEdges"><rect x="0" y="0" width="2" height="1" fill="#444"/><rect x="5" y="0" width="2" height="1" fill="#444"/><rect x="0" y="1" width="3" height="1" fill="#444"/><rect x="4" y="1" width="3" height="1" fill="#444"/><rect x="1" y="2" width="5" height="1" fill="#444"/><rect x="2" y="3" width="3" height="1" fill="#444"/><rect x="1" y="4" width="5" height="1" fill="#444"/><rect x="0" y="5" width="3" height="1" fill="#444"/><rect x="4" y="5" width="3" height="1" fill="#444"/><rect x="0" y="6" width="2" height="1" fill="#444"/><rect x="5" y="6" width="2" height="1" fill="#444"/></svg>
<div class="a" style="left:159px;top:567px;width:48px;height:22px;background:#CBC8C2;border-top:1px solid #E6E3DE;border-left:1px solid #E6E3DE;border-right:1px solid #B4B1AB;box-sizing:border-box;width:49px"></div>
<div class="t" style="left:-16.5px;width:400px;text-align:center;top:571.70px;">General</div>
<div class="a" style="left:241.6px;top:567px;width:37.400000000000006px;height:22px;background:#CBC8C2;border-top:1px solid #E6E3DE;border-left:1px solid #E6E3DE;border-right:1px solid #B4B1AB;box-sizing:border-box;width:38.400000000000006px"></div>
<div class="t" style="left:60.80000000000001px;width:400px;text-align:center;top:571.70px;">VLAN</div>
<div class="a" style="left:280px;top:567px;width:44px;height:22px;background:#CBC8C2;border-top:1px solid #E6E3DE;border-left:1px solid #E6E3DE;border-right:1px solid #B4B1AB;box-sizing:border-box;width:45px"></div>
<div class="t" style="left:102.5px;width:400px;text-align:center;top:571.70px;">Status</div>
<div class="a" style="left:325px;top:567px;width:44px;height:22px;background:#CBC8C2;border-top:1px solid #E6E3DE;border-left:1px solid #E6E3DE;border-right:1px solid #B4B1AB;box-sizing:border-box;width:45px"></div>
<div class="t" style="left:147.5px;width:400px;text-align:center;top:571.70px;">Traffic</div>
<div class="a" style="left:208px;top:564px;width:33.599999999999994px;height:26px;background:#DEDBD5;border-top:1px solid #fff;border-left:1px solid #fff;border-right:1px solid #A9A6A0;box-sizing:border-box;z-index:1"></div>
<div class="t" style="left:24.80000000000001px;width:400px;text-align:center;top:570.20px;z-index:1">STP</div>
<div class="a" style="left:155px;top:589px;width:309px;height:401px;border-top:1px solid #fff;border-left:1px solid #fff;border-right:1px solid #A09D97;border-bottom:1px solid #A09D97;box-sizing:border-box"></div>
<div class="t" style="right:1105.5px;top:599.70px;">Protocol Mode:</div>
<svg class="a" style="left:269px;top:600px" width="12" height="12" viewBox="0 0 12 12"><circle cx="6" cy="6" r="5.5" fill="#fff"/><path d="M2.1 9.9A5.5 5.5 0 0 1 9.9 2.1" stroke="#8E8C88" fill="none"/><path d="M2.8 9.2A4.5 4.5 0 0 1 9.2 2.8" stroke="#404040" fill="none"/><path d="M9.9 2.1A5.5 5.5 0 0 1 2.1 9.9" stroke="#fff" fill="none"/><path d="M9.2 2.8A4.5 4.5 0 0 1 2.8 9.2" stroke="#DEDBD5" fill="none"/></svg>
<div class="t" style="left:283.7px;top:599.70px;">none</div>
<svg class="a" style="left:318px;top:600px" width="12" height="12" viewBox="0 0 12 12"><circle cx="6" cy="6" r="5.5" fill="#fff"/><path d="M2.1 9.9A5.5 5.5 0 0 1 9.9 2.1" stroke="#8E8C88" fill="none"/><path d="M2.8 9.2A4.5 4.5 0 0 1 9.2 2.8" stroke="#404040" fill="none"/><path d="M9.9 2.1A5.5 5.5 0 0 1 2.1 9.9" stroke="#fff" fill="none"/><path d="M9.2 2.8A4.5 4.5 0 0 1 2.8 9.2" stroke="#DEDBD5" fill="none"/></svg>
<div class="t" style="left:332.5px;top:599.70px;">STP</div>
<svg class="a" style="left:361px;top:600px" width="12" height="12" viewBox="0 0 12 12"><circle cx="6" cy="6" r="5.5" fill="#fff"/><path d="M2.1 9.9A5.5 5.5 0 0 1 9.9 2.1" stroke="#8E8C88" fill="none"/><path d="M2.8 9.2A4.5 4.5 0 0 1 9.2 2.8" stroke="#404040" fill="none"/><path d="M9.9 2.1A5.5 5.5 0 0 1 2.1 9.9" stroke="#fff" fill="none"/><path d="M9.2 2.8A4.5 4.5 0 0 1 2.8 9.2" stroke="#DEDBD5" fill="none"/><circle cx="6" cy="6" r="1.6" fill="#000"/></svg>
<div class="t" style="left:375.5px;top:599.70px;">RSTP</div>
<svg class="a" style="left:411px;top:600px" width="12" height="12" viewBox="0 0 12 12"><circle cx="6" cy="6" r="5.5" fill="#fff"/><path d="M2.1 9.9A5.5 5.5 0 0 1 9.9 2.1" stroke="#8E8C88" fill="none"/><path d="M2.8 9.2A4.5 4.5 0 0 1 9.2 2.8" stroke="#404040" fill="none"/><path d="M9.9 2.1A5.5 5.5 0 0 1 2.1 9.9" stroke="#fff" fill="none"/><path d="M9.2 2.8A4.5 4.5 0 0 1 2.8 9.2" stroke="#DEDBD5" fill="none"/></svg>
<div class="t" style="left:425px;top:599.70px;">MSTP</div>
<div class="t" style="right:1105.5px;top:622.70px;">Priority:</div>
<div class="a inp" style="left:268px;top:620px;width:164px;height:15px;background:#fff"></div>
<div class="t" style="left:271px;top:622.70px;">6000</div>
<div class="t" style="left:435.5px;top:622.70px;">hex</div>
<div class="a" style="left:163px;top:644px;width:293px;height:1px;background:#B5B2AC"></div>
<div class="a" style="left:163px;top:645px;width:293px;height:1px;background:#fff"></div>
<div class="t" style="right:1105.5px;top:653.70px;color:#A09E9A">Region Name:</div>
<div class="a inp" style="left:268px;top:651px;width:187px;height:15px;background:#DEDBD5"></div>
<div class="t" style="right:1105.5px;top:676.70px;color:#A09E9A">Region Revision:</div>
<div class="a inp" style="left:268px;top:674px;width:187px;height:15px;background:#DEDBD5"></div>
<div class="t" style="left:271px;top:676.70px;">0</div>
<div class="a" style="left:163px;top:698px;width:293px;height:1px;background:#B5B2AC"></div>
<div class="a" style="left:163px;top:699px;width:293px;height:1px;background:#fff"></div>
<div class="t" style="right:1105.5px;top:707.70px;">Max Message Age:</div>
<div class="a inp" style="left:268px;top:705px;width:187px;height:15px;background:#fff"></div>
<div class="t" style="left:271px;top:707.70px;">00:00:20</div>
<div class="t" style="right:1105.5px;top:730.70px;">Forward Delay:</div>
<div class="a inp" style="left:268px;top:728px;width:187px;height:15px;background:#fff"></div>
<div class="t" style="left:271px;top:730.70px;">00:00:15</div>
<div class="t" style="right:1105.5px;top:753.70px;">Transmit Hold Count:</div>
<div class="a inp" style="left:268px;top:751px;width:187px;height:15px;background:#fff"></div>
<div class="t" style="left:271px;top:753.70px;">6</div>
<div class="t" style="right:1105.5px;top:776.70px;">Max Hops:</div>
<div class="a inp" style="left:268px;top:774px;width:187px;height:15px;background:#fff"></div>
<div class="t" style="left:271px;top:776.70px;">20</div>
<div class="a btn" style="left:474px;top:568px;width:80px;height:21px;border-color:#000;box-shadow:inset 1px 1px 0 #fff,1px 1px 0 #fff;"></div>
<div class="t" style="left:315.0px;width:400px;text-align:center;top:573.70px;">OK</div>
<div class="a btn" style="left:474px;top:594px;width:80px;height:21px;"></div>
<div class="t" style="left:315.0px;width:400px;text-align:center;top:599.70px;">Cancel</div>
<div class="a btn" style="left:474px;top:620px;width:80px;height:21px;"></div>
<div class="t" style="left:315.0px;width:400px;text-align:center;top:625.70px;">Apply</div>
<div class="a btn" style="left:474px;top:651px;width:80px;height:21px;"></div>
<div class="t" style="left:315.0px;width:400px;text-align:center;top:656.70px;">Disable</div>
<div class="a btn" style="left:474px;top:677px;width:80px;height:21px;"></div>
<div class="t" style="left:315.0px;width:400px;text-align:center;top:682.70px;">Comment</div>
<div class="a btn" style="left:474px;top:703px;width:80px;height:21px;"></div>
<div class="t" style="left:315.0px;width:400px;text-align:center;top:708.70px;">Copy</div>
<div class="a btn" style="left:474px;top:729px;width:80px;height:21px;"></div>
<div class="t" style="left:315.0px;width:400px;text-align:center;top:734.70px;">Remove</div>
<div class="a btn" style="left:474px;top:755px;width:80px;height:21px;"></div>
<div class="t" style="left:315.0px;width:400px;text-align:center;top:760.70px;">Torch</div>
</div>
<div class="a" style="left:0;top:0;width:1368px;height:966px;z-index:7">
<div class="a" style="left:718px;top:441px;width:410px;height:387px;border:1px solid #000;background:#DEDBD5"></div>
<div class="a" style="left:719px;top:442px;width:408px;height:385px;border-top:1px solid #E2DFDA;border-left:1px solid #F2F0EC;border-right:1px solid #9A9894;border-bottom:1px solid #9A9894"></div>
<div class="a" style="left:719px;top:442px;width:409px;height:22px;background:#6068CC;border-top:1px solid #98A0EC;border-left:1px solid #98A0EC;box-sizing:border-box"></div>
<div class="t" style="left:723.8px;top:448.70px;color:#fff">Bridge Port &lt;bonding-host1&gt;</div>
<div class="a" style="left:1093px;top:446px;width:13px;height:13px;border:1px solid #555;background:#DEDBD5;box-shadow:inset 1px 1px 0 #fff"></div>
<div class="a" style="left:1096px;top:449px;width:7px;height:6px;border:1px solid #444;border-top-width:2px"></div>
<div class="a" style="left:1110px;top:446px;width:13px;height:13px;border:1px solid #555;background:#DEDBD5;box-shadow:inset 1px 1px 0 #fff"></div>
<svg class="a" style="left:1114px;top:450px" width="7" height="7" viewBox="0 0 7 7" shape-rendering="crispEdges"><rect x="0" y="0" width="2" height="1" fill="#444"/><rect x="5" y="0" width="2" height="1" fill="#444"/><rect x="0" y="1" width="3" height="1" fill="#444"/><rect x="4" y="1" width="3" height="1" fill="#444"/><rect x="1" y="2" width="5" height="1" fill="#444"/><rect x="2" y="3" width="3" height="1" fill="#444"/><rect x="1" y="4" width="5" height="1" fill="#444"/><rect x="0" y="5" width="3" height="1" fill="#444"/><rect x="4" y="5" width="3" height="1" fill="#444"/><rect x="0" y="6" width="2" height="1" fill="#444"/><rect x="5" y="6" width="2" height="1" fill="#444"/></svg>
<div class="a" style="left:725px;top:469px;width:48px;height:22px;background:#CBC8C2;border-top:1px solid #E6E3DE;border-left:1px solid #E6E3DE;border-right:1px solid #B4B1AB;box-sizing:border-box;width:49px"></div>
<div class="t" style="left:549.5px;width:400px;text-align:center;top:473.70px;">General</div>
<div class="a" style="left:807px;top:469px;width:38px;height:22px;background:#CBC8C2;border-top:1px solid #E6E3DE;border-left:1px solid #E6E3DE;border-right:1px solid #B4B1AB;box-sizing:border-box;width:39px"></div>
<div class="t" style="left:626.5px;width:400px;text-align:center;top:473.70px;">VLAN</div>
<div class="a" style="left:846px;top:469px;width:44px;height:22px;background:#CBC8C2;border-top:1px solid #E6E3DE;border-left:1px solid #E6E3DE;border-right:1px solid #B4B1AB;box-sizing:border-box;width:45px"></div>
<div class="t" style="left:668.5px;width:400px;text-align:center;top:473.70px;">Status</div>
<div class="a" style="left:774px;top:466px;width:33px;height:26px;background:#DEDBD5;border-top:1px solid #fff;border-left:1px solid #fff;border-right:1px solid #A9A6A0;box-sizing:border-box;z-index:1"></div>
<div class="t" style="left:590.5px;width:400px;text-align:center;top:472.20px;z-index:1">STP</div>
<div class="a" style="left:721px;top:491px;width:307px;height:314px;border-top:1px solid #fff;border-left:1px solid #fff;border-right:1px solid #A09D97;border-bottom:1px solid #A09D97;box-sizing:border-box"></div>
<div class="t" style="right:548.5px;top:501.70px;">Priority:</div>
<div class="a inp" style="left:825px;top:499px;width:170px;height:15px;background:#fff"></div>
<div class="t" style="left:828px;top:501.70px;background:#0A246A;color:#fff;padding:0 1px">60</div>
<div class="t" style="left:1000px;top:501.70px;">hex</div>
<div class="t" style="right:548.5px;top:524.70px;">Path Cost:</div>
<div class="a inp" style="left:825px;top:522px;width:193px;height:15px;background:#fff"></div>
<div class="t" style="left:828px;top:524.70px;">10</div>
<div class="t" style="right:548.5px;top:547.70px;">Internal Path Cost:</div>
<div class="a inp" style="left:825px;top:545px;width:193px;height:15px;background:#fff"></div>
<div class="t" style="left:828px;top:547.70px;">10</div>
<div class="a" style="left:729px;top:569px;width:291px;height:1px;background:#B5B2AC"></div>
<div class="a" style="left:729px;top:570px;width:291px;height:1px;background:#fff"></div>
<div class="t" style="right:548.5px;top:578.70px;">Edge:</div>
<div class="a inp" style="left:825px;top:576px;width:175px;height:15px;background:#fff"></div>
<div class="t" style="left:828px;top:578.70px;">auto</div>
<div class="a btn" style="left:1003px;top:576px;width:15px;height:15px;border-color:#8E8C88"></div>
<svg class="a" style="left:1007px;top:581px" width="9" height="9" viewBox="0 0 9 9"><rect x="1" y="0" width="7" height="1" fill="#000"/><rect x="3" y="2" width="3" height="2.5" fill="#000"/><path d="M0.5 4h8L4.5 8z" fill="#000"/></svg>
<div class="t" style="right:548.5px;top:601.70px;">Point To Point:</div>
<div class="a inp" style="left:825px;top:599px;width:175px;height:15px;background:#fff"></div>
<div class="t" style="left:828px;top:601.70px;">auto</div>
<div class="a btn" style="left:1003px;top:599px;width:15px;height:15px;border-color:#8E8C88"></div>
<svg class="a" style="left:1007px;top:604px" width="9" height="9" viewBox="0 0 9 9"><rect x="1" y="0" width="7" height="1" fill="#000"/><rect x="3" y="2" width="3" height="2.5" fill="#000"/><path d="M0.5 4h8L4.5 8z" fill="#000"/></svg>
<div class="a" style="left:729px;top:623px;width:291px;height:1px;background:#B5B2AC"></div>
<div class="a" style="left:729px;top:624px;width:291px;height:1px;background:#fff"></div>
<div class="a" style="left:825px;top:633px;width:11px;height:11px;border:1px solid #8E8C88;background:#fff;box-shadow:1px 1px 0 #fff"></div>
<div class="t" style="left:840.5px;top:632.70px;">Auto Isolate</div>
<div class="a" style="left:825px;top:656px;width:11px;height:11px;border:1px solid #8E8C88;background:#fff;box-shadow:1px 1px 0 #fff"></div>
<div class="t" style="left:840.5px;top:655.70px;">Restricted Role</div>
<div class="a" style="left:825px;top:679px;width:11px;height:11px;border:1px solid #8E8C88;background:#fff;box-shadow:1px 1px 0 #fff"></div>
<div class="t" style="left:840.5px;top:678.70px;">Restricted TCN</div>
<div class="a" style="left:825px;top:702px;width:11px;height:11px;border:1px solid #8E8C88;background:#fff;box-shadow:1px 1px 0 #fff"></div>
<svg class="a" style="left:827px;top:704px" width="9" height="9" viewBox="0 0 9 9"><path d="M1 4l2.5 3L8 1" stroke="#000" stroke-width="2" fill="none"/></svg>
<div class="t" style="left:840.5px;top:701.70px;">BPDU Guard</div>
<div class="a btn" style="left:1038px;top:470px;width:80px;height:21px;border-color:#000;box-shadow:inset 1px 1px 0 #fff,1px 1px 0 #fff;"></div>
<div class="t" style="left:879.0px;width:400px;text-align:center;top:475.70px;">OK</div>
<div class="a btn" style="left:1038px;top:496px;width:80px;height:21px;"></div>
<div class="t" style="left:879.0px;width:400px;text-align:center;top:501.70px;">Cancel</div>
<div class="a btn" style="left:1038px;top:522px;width:80px;height:21px;"></div>
<div class="t" style="left:879.0px;width:400px;text-align:center;top:527.70px;">Apply</div>
<div class="a btn" style="left:1038px;top:553px;width:80px;height:21px;"></div>
<div class="t" style="left:879.0px;width:400px;text-align:center;top:558.70px;">Disable</div>
<div class="a btn" style="left:1038px;top:579px;width:80px;height:21px;"></div>
<div class="t" style="left:879.0px;width:400px;text-align:center;top:584.70px;">Comment</div>
<div class="a btn" style="left:1038px;top:605px;width:80px;height:21px;"></div>
<div class="t" style="left:879.0px;width:400px;text-align:center;top:610.70px;">Copy</div>
<div class="a btn" style="left:1038px;top:631px;width:80px;height:21px;"></div>
<div class="t" style="left:879.0px;width:400px;text-align:center;top:636.70px;">Remove</div>
<div class="a" style="left:721px;top:807px;width:129px;height:16px;border:1px solid #A6A39D;box-shadow:inset 1px 1px 0 #fff"></div>
<div class="t" style="left:724px;top:809.70px;">enabled</div>
<div class="a" style="left:855px;top:807px;width:129px;height:16px;border:1px solid #A6A39D;box-shadow:inset 1px 1px 0 #fff"></div>
<div class="t" style="left:858px;top:809.70px;color:#A09E9A">inactive</div>
<div class="a" style="left:989px;top:807px;width:133px;height:16px;border:1px solid #A6A39D;box-shadow:inset 1px 1px 0 #fff"></div>
<div class="t" style="left:992px;top:809.70px;">Hw. Offload</div>
</div></div></body></html>
